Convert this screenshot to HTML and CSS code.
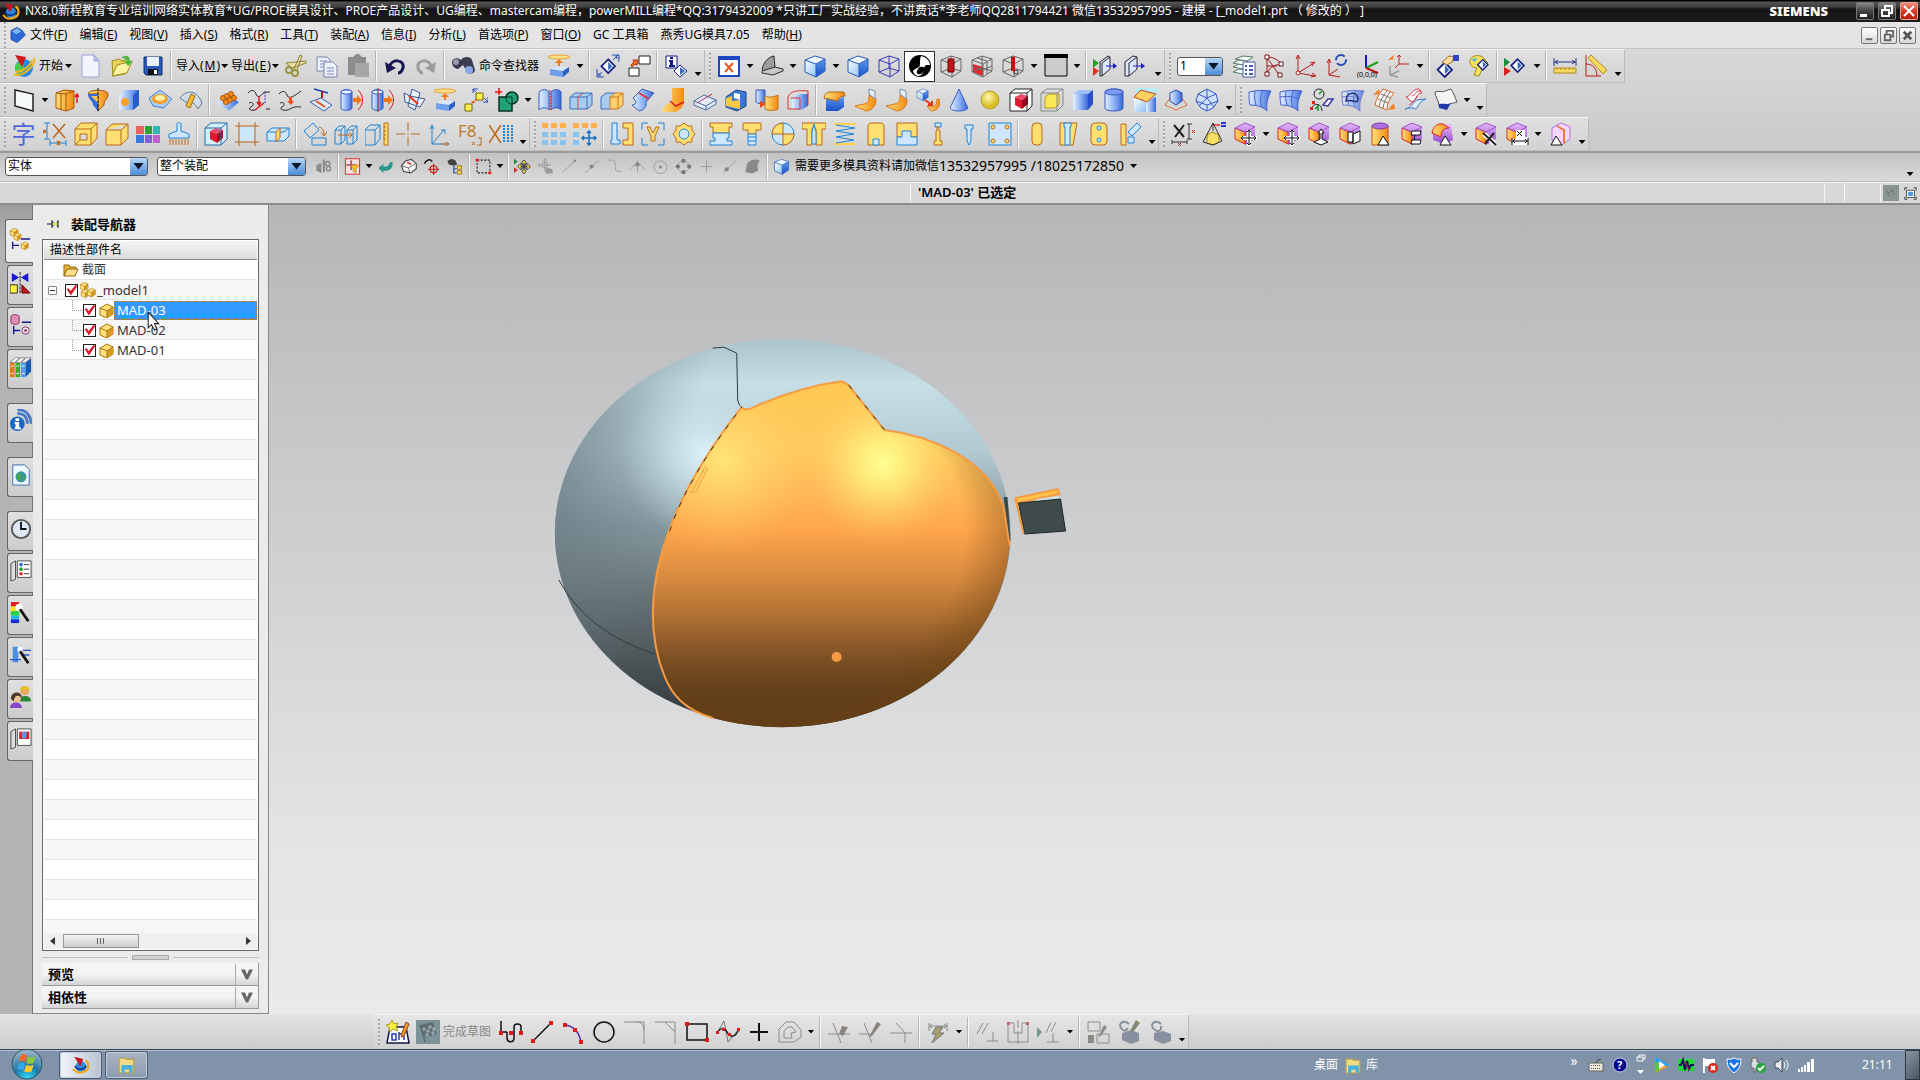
FILE: index.html
```html
<!DOCTYPE html>
<html lang="zh-CN">
<head>
<meta charset="utf-8">
<title>NX 8.0 - 建模 - [_model1.prt]</title>
<link rel="stylesheet" href="styles.css">
</head>
<body>
<svg class="sprite" aria-hidden="true">
<defs>
<linearGradient id="gBlue"><stop offset="0" stop-color="#e6f0ff"/><stop offset=".5" stop-color="#8fb4f5"/><stop offset="1" stop-color="#3a66d6"/></linearGradient>
<linearGradient id="gDeep" x2="0" y2="1"><stop offset="0" stop-color="#5b9cf0"/><stop offset="1" stop-color="#1a4fc8"/></linearGradient>
<linearGradient id="gPale" x2="1" y2="1"><stop offset="0" stop-color="#ffffff"/><stop offset="1" stop-color="#8ec2f2"/></linearGradient>
<linearGradient id="gOr"><stop offset="0" stop-color="#ffe07c"/><stop offset="1" stop-color="#f48a10"/></linearGradient>
<linearGradient id="gVio" x2="0" y2="1"><stop offset="0" stop-color="#e4b8f8"/><stop offset="1" stop-color="#9448cc"/></linearGradient>
<radialGradient id="gYel" cx=".4" cy=".35"><stop offset="0" stop-color="#fffbb0"/><stop offset="1" stop-color="#d8bc28"/></radialGradient>
<radialGradient id="gOrb" cx=".5" cy="1" r=".9"><stop offset="0" stop-color="#38e0f8"/><stop offset=".5" stop-color="#1a78a8"/><stop offset="1" stop-color="#8fb0c4"/></radialGradient>
<g id="p-cube"><path fill="#eef7ff" d="M2 6 12 2l10 3-9 5z"/><path fill="url(#gPale)" d="M2 6l11 4v13L2 18z"/><path fill="url(#gDeep)" d="M13 10l9-5v12l-9 6z"/><path class="ln" stroke="#2a5cb8" d="M2 6 12 2l10 3v12l-9 6-11-5zl11 4 9-5M13 10v13"/></g>
<g id="p-wire"><path class="ln" d="M2 6 12 2l10 3v12l-9 6-11-5zl11 4 9-5M13 10v13M12 2v12L2 18M12 14l10 3"/></g>
<g id="p-slab"><path fill="#d8e8fb" d="M3 15l7-3 12 1-6 4z"/><path fill="#6f9fec" d="M3 15l13 2v6L3 21z"/><path fill="#2d5fcc" d="M16 17l6-4v5l-6 5z"/></g>
<g id="p-red"><path fill="#f04a6a" d="M6 9l6-3 7 2-6 4z"/><path fill="#e01830" d="M6 9l7 3v9l-7-4z"/><path fill="#9c0a1c" d="M13 12l6-4v8l-6 5z"/></g>
<g id="p-sync"><path fill="url(#gVio)" d="M2 6 12 1l10 4v12l-10 6V10z"/><path fill="url(#gOr)" stroke="#e02020" d="M2 6l10 4v12L2 17z"/><path class="ln" stroke="#a050d0" d="M2 6 12 1l10 4-10 5z"/></g>
<g id="p-move"><path class="ln" stroke="#fff" stroke-width="4" d="M16 8v16M8 16h16"/><path class="ln" stroke="#111" d="M16 8v15M8 16h15M14 10l2-2 2 2M14 21l2 2 2-2M10 14l-2 2 2 2M21 14l2 2-2 2"/></g>
<g id="p-tri"><path fill="#fff" stroke="#111" d="M14 14l6 9H9z"/></g>
<g id="p-dia"><path fill="#fff" stroke="#101c80" stroke-width="2" d="M12 4l8 8-8 8-8-8z"/><path fill="#3a68c0" d="M12 7l5 5-5 5z"/></g>
<g id="p-box"><path fill="#ffe27a" stroke="#a8700c" d="M2 6l7-4 6 3v7l-6 4-7-3z"/><path fill="#d89a20" d="M9 9l6-4v7l-6 4z"/><path class="ln" stroke="#a8700c" d="M2 6l7 3 6-4M9 9v7"/></g>
</defs>

<!-- standard toolbar -->
<symbol id="nx" viewBox="0 0 24 24"><circle cx="12" cy="14" r="9" fill="#2a8ae0"/><path fill="#4cc84c" d="M5 9c4-2 8 2 7 6s-5 6-7 4-3-8 0-10z"/><path class="ln" stroke="#f0b818" stroke-width="2" d="M2 20c8 4 22-8 20-16M4 18c6 0 14-5 16-12"/><path fill="#d01818" d="M3 1l11 2-4 10z"/></symbol>
<symbol id="nxt" viewBox="0 0 24 24"><circle cx="12" cy="14" r="7" fill="#2a8ae0"/><path class="ln" stroke="#f0a818" stroke-width="3" d="M2 17c2 8 20 6 20-4 0-3-2-6-4-7"/><path class="ln" stroke="#102c80" stroke-width="2" d="M4 13c2 6 12 6 15 0"/><path fill="#c01828" d="M3 1l12 3-4 10z"/></symbol>
<symbol id="cubeb" viewBox="0 0 24 24"><path fill="#2a6ad8" stroke="#123a90" d="M4 6l8-4 7 4 4 6-6 6-5 4-8-4z"/><path fill="#7db4f8" d="M5 7l7-4 6 4-7 4z"/></symbol>
<symbol id="new" viewBox="0 0 24 24"><path fill="#f2f4ff" stroke="#9aa2d8" d="M3 1h12l5 6v16H3z"/><path fill="#c4caf0" stroke="#9aa2d8" d="M15 1v6h5z"/></symbol>
<symbol id="open" viewBox="0 0 24 24"><path fill="#e8d45c" stroke="#a08a18" d="M2 7l7-2 3 2 6-2v4l-3 11L3 22z"/><path fill="#fbf3a0" stroke="#a08a18" d="M2 22L7 11l15-4-5 12z"/><path fill="#4cb83c" d="M11 4c5-4 9-2 9 3h3l-5 5-4-5h3c0-2-3-3-6-3z"/></symbol>
<symbol id="save" viewBox="0 0 24 24"><path fill="#2a58b8" stroke="#102c70" d="M3 3h18v18H5l-2-2z"/><path fill="#e8f0ff" d="M6 3h12v9H6z"/><path fill="#111" d="M7 15h10v6H7z"/><path fill="#fff" d="M13 16h3v4h-3z"/></symbol>
<symbol id="cut" viewBox="0 0 24 24"><path fill="#e8e0a0" stroke="#8a8238" d="M16 1l2 1-5 14-3-1zM2 9l20-2v2L8 14z"/><g class="ln" stroke="#9c9440" stroke-width="2"><circle cx="5" cy="16" r="3"/><circle cx="11" cy="19" r="3"/></g></symbol>
<symbol id="copy" viewBox="0 0 24 24"><g fill="#eef0fa" stroke="#7c84b0"><path d="M2 3h10l3 3v11H2z"/><path d="M9 8h9l4 4v11H9z"/></g><path class="ln" stroke="#7888c0" d="M5 7h7M5 10h4M5 13h4M12 14h7M12 17h7M12 20h7"/></symbol>
<symbol id="paste" viewBox="0 0 24 24"><path fill="#8c8c8c" d="M2 3h5l3-3h3l3 3h4v18H2z"/><path fill="#a6a6a6" d="M9 9h14v14H9z"/></symbol>
<symbol id="undo" viewBox="0 0 24 24"><path class="ln" stroke="#161650" stroke-width="3" d="M6 14C8 4 22 5 20 14c-1 3-3 5-5 5"/><path fill="#161650" d="M2 8l2 11 9-5z"/></symbol>
<symbol id="redo" viewBox="0 0 24 24"><path class="ln" stroke="#9c9c9c" stroke-width="3" d="M18 14C16 4 2 5 4 14c1 3 3 5 5 5"/><path fill="#9c9c9c" d="M22 8l-2 11-9-5z"/></symbol>
<symbol id="find" viewBox="0 0 24 24"><path fill="#3c3c50" d="M1 8c0-4 6-5 9-2 2-4 10-4 11 0l3 10c-1 5-8 5-9 0l-3-5-5 4C5 15 1 13 1 8z"/><circle cx="18" cy="16" r="4" fill="#8aa8e8"/><circle cx="5" cy="8" r="3" fill="#9a9ab0"/></symbol>
<symbol id="thick" viewBox="0 0 24 24"><ellipse cx="12" cy="3" rx="11" ry="2" fill="#ffe28c" stroke="#f0a030"/><path fill="#f07818" d="M12 5l4 4h-3v4h-2V9H8z"/><use href="#p-slab"/></symbol>
<symbol id="rot" viewBox="0 0 24 24"><g transform="translate(2 2) scale(.85)"><use href="#p-dia"/></g><path class="ln" stroke="#2a50b0" d="M16 1h7v7M22 1l-5 5M20 1v3h3M1 15v8h7M1 23l5-5M4 23v-3H1"/></symbol>
<symbol id="swap" viewBox="0 0 24 24"><path fill="#fff" stroke="#222" d="M12 2h11v8H12zM2 14h10v8H2z"/><path fill="#f07818" stroke="#c02818" d="M4 11l3-3-1-2 5 0-1 5-2-1-3 3z"/></symbol>
<symbol id="info" viewBox="0 0 24 24"><path fill="#fff" stroke="#101c80" d="M2 2h11v12H2z"/><path fill="#101c80" d="M6 3h3v2H6zM5 6h4v5h2v2H5v-2h1V8H5z"/><path fill="#fff" stroke="#101c80" d="M16 11l7 6-7 6-6-6z"/><path fill="#3a68c0" d="M16 13l5 4-5 4z"/></symbol>
<symbol id="fit" viewBox="0 0 24 24"><path fill="#fff" stroke="#1a48c0" stroke-width="2" d="M2 3h20v19H2z"/><path fill="#1a48c0" d="M2 2h20v4H2z"/><path class="ln" stroke="#e05a18" stroke-width="2" d="M8 9l8 9M16 9l-8 9"/></symbol>
<symbol id="orient" viewBox="0 0 24 24"><path fill="#9c9c9c" stroke="#2c2c2c" d="M2 15C4 8 8 3 14 2l1 11-10 5z"/><path fill="#c8c8c8" stroke="#2c2c2c" d="M2 17l13-4 8 2v2l-10 4-11-2z"/></symbol>
<symbol id="shade" viewBox="0 0 24 24"><use href="#p-cube"/></symbol>
<symbol id="wire" viewBox="0 0 24 24"><use href="#p-wire" stroke="#3838b8"/></symbol>
<symbol id="studio" viewBox="0 0 24 24"><circle cx="12" cy="12" r="11" fill="#000"/><path fill="#fff" d="M13 2a10 10 0 0 1 9 9c-3 0-5-1-6 3s-1 8-6 8c-2 0-5-3-5-5 3-4 7-2 7-7 0-3 0-6 1-8z"/><path fill="#000" d="M12 13c3-1 5 0 4 3s-3 5-6 4 0-6 2-7z"/></symbol>
<symbol id="face1" viewBox="0 0 24 24"><use href="#p-wire" stroke="#666"/><path fill="#b81818" stroke="#700" d="M9 5h6v13H9z"/></symbol>
<symbol id="face2" viewBox="0 0 24 24"><path fill="#e02828" d="M3 10l10 3v9L3 18z"/><use href="#p-wire" stroke="#666"/><path class="ln" stroke="#666" d="M7 4l10 3v13M2 12l11 4 9-4"/></symbol>
<symbol id="face3" viewBox="0 0 24 24"><use href="#p-wire" stroke="#666"/><path fill="#b81818" d="M10 3h4v14h-4z"/><circle cx="15" cy="18" r="2" fill="none" stroke="#333"/></symbol>
<symbol id="bg" viewBox="0 0 24 24"><path fill="#ccc" stroke="#000" stroke-width="1" d="M1 2h22v20H1z"/><path fill="#000" d="M0 0h24v4H0z"/></symbol>
<symbol id="clip" viewBox="0 0 24 24"><path fill="#28a028" d="M0 5l6 4-6 5z"/><path fill="#e03020" d="M0 13l6 4-6 5z"/><path fill="#dce8ff" stroke="#222" d="M7 8l8-6 2 1v12l-8 7H7z"/><path class="ln" stroke="#222" d="M9 9v13M9 9l8-6"/><path class="ln" stroke="#1818d0" d="M13 12h9"/><path fill="#1818d0" d="M20 9l4 3-4 3z"/></symbol>
<symbol id="clip2" viewBox="0 0 24 24"><path fill="#dce8ff" stroke="#222" d="M1 8l8-6 4 1v12l-8 7H1z"/><path class="ln" stroke="#222" d="M5 9v13M5 9l8-6"/><path class="ln" stroke="#1818d0" d="M9 12h9"/><path fill="#1818d0" d="M17 9l4 3-4 3z"/></symbol>
<symbol id="layers" viewBox="0 0 24 24"><g fill="#f4fff8" stroke="#5a7a6a"><path d="M1 18l6-3 9 1-5 4z"/><path d="M1 13l6-3 9 1-5 4z"/><path d="M1 9l6-3 9 1-5 4z"/><path d="M3 5l8-3 10 1-6 4z"/></g><path fill="#fff" stroke="#4858b0" d="M11 8h12v15H11z"/><path class="ln" stroke="#4858b0" stroke-width="2" d="M13 12h2M17 12h4M13 16h2M17 16h4M13 20h2M17 20h4"/></symbol>
<symbol id="wcs1" viewBox="0 0 24 24"><path class="ln" stroke="#a01818" d="M4 3v16M4 3c8 0 14 5 14 8M4 19c4-7 9-9 14-8M5 5l12 17M4 12l10 0"/><g fill="#fff" stroke="#701010"><path d="M2 1h4v4H2zM2 18h4v4H2zM16 8h4v4h-4zM15 19h4v4h-4z"/></g></symbol>
<symbol id="wcs2" viewBox="0 0 24 24"><path class="ln" stroke="#b81c1c" d="M4 19V2M4 19L20 9M4 19l17 3M2 5l2-4 2 4M16 9l5-1-3 4M18 19l4 3-5 1"/><circle cx="4" cy="19" r="2" fill="#fff" stroke="#b81c1c"/></symbol>
<symbol id="wcs3" viewBox="0 0 24 24"><path class="ln" stroke="#b81c1c" d="M4 21V6M4 21l9-6M4 21l11 2M2 9l2-4 2 4"/><circle cx="16" cy="6" r="5" fill="none" stroke="#2848b8" stroke-width="2" stroke-dasharray="12 3"/></symbol>
<symbol id="wcs5" viewBox="0 0 24 24"><path class="ln" stroke="#c02020" d="M12 10V1M12 10h10M12 10l-4 4M10 3l2-2 2 2"/><path class="ln" stroke="#999" stroke-width="1.500" d="M3 21v-9M3 21l9-4M3 21l8 2"/><path fill="#f07818" d="M1 6l6-5-1 4 3 0z"/></symbol>
<symbol id="hand" viewBox="0 0 24 24"><g transform="translate(-2 5) scale(.9)"><use href="#p-dia"/></g><path fill="#ffdca0" stroke="#a07030" d="M6 8l7-6 5 1-2 5-5 3z"/><path fill="#2a48c0" d="M17 1h6v6h-6z"/></symbol>
<symbol id="key" viewBox="0 0 24 24"><path fill="#f8e460" stroke="#a88818" d="M3 6c2-6 13-6 15 0l3 3-6 6-3 7-5-1 3-7c-5 0-8-4-7-8z"/><path fill="#38b0e8" d="M5 5l6-1-4 4z"/><g transform="translate(8 3) scale(.65)"><use href="#p-dia"/></g></symbol>
<symbol id="show" viewBox="0 0 24 24"><path fill="#189038" d="M0 4l6 4-6 5z"/><path fill="#d82020" d="M0 13l7 4-7 5z"/><g transform="translate(4 2) scale(.8)"><use href="#p-dia"/></g></symbol>
<symbol id="dist" viewBox="0 0 24 24"><path class="ln" stroke="#283880" d="M1 4v8M23 4v8M1 8h22M5 6L2 8l3 2M19 6l3 2-3 2"/><path fill="#f8d860" stroke="#b08a18" d="M1 14h22v5H1z"/><path class="ln" stroke="#b08a18" d="M4 14v2M8 14v2M12 14v2M16 14v2M20 14v2"/></symbol>
<symbol id="angle" viewBox="0 0 24 24"><path class="ln" stroke="#b81c1c" d="M2 1v21h15M2 10c7 0 11 5 11 12"/><path fill="#f8d860" stroke="#b08a18" d="M7 1l16 15-4 4L4 4z"/></symbol>

<!-- feature toolbar -->
<symbol id="sketch" viewBox="0 0 24 24"><path fill="#f6faf6" stroke="#222" stroke-width="1.500" d="M3 2l18 4v17L3 18z"/></symbol>
<symbol id="extr" viewBox="0 0 24 24"><path fill="url(#gOr)" stroke="#a85408" d="M1 5l8-3 10 1v17l-8 3-10-3z"/><path class="ln" stroke="#a85408" d="M6 6v15M11 6v16M1 5l10 1 8-3"/><path class="ln" stroke="#e01818" stroke-width="1.500" d="M22 15V7M20 9l2-3 2 3"/></symbol>
<symbol id="rev" viewBox="0 0 24 24"><path fill="url(#gOr)" stroke="#a85408" d="M2 6c0-5 20-5 20 0 0 6-4 5-4 11l-6 6V6z"/><path fill="#3a6ad8" d="M2 6l10 0v17l-5-6c0-5-5-5-5-11z"/><path fill="#f8c858" d="M5 8h7v7z"/><path class="ln" stroke="#111" stroke-dasharray="3 1" d="M12 0v24"/></symbol>
<symbol id="hole" viewBox="0 0 24 24"><path fill="url(#gBlue)" d="M2 7l6-5h14v15l-6 5H2z"/><path fill="#2a5ad0" d="M16 7l6-5v15l-6 5z"/><circle cx="8" cy="14" r="4" fill="#f8a028"/><path fill="#8a5008" d="M4 14a4 4 0 0 0 5 4 4 4 0 0 1-5-4z"/></symbol>
<symbol id="emb" viewBox="0 0 24 24"><path fill="#a8ccf8" stroke="#4a80d0" d="M1 10L12 2l12 9-8 9-11-2z"/><ellipse cx="12" cy="11" rx="8" ry="5" fill="#f8a028"/><ellipse cx="12" cy="10" rx="5" ry="3" fill="#fff0b0"/></symbol>
<symbol id="off" viewBox="0 0 24 24"><path fill="#cfdcec" stroke="#607890" d="M1 10C8 1 18 2 23 15l-4 6c-3-6-7-8-11-6z"/><path fill="#f8b838" stroke="#a07010" d="M12 6l4 2-5 12-4-2z"/></symbol>
<symbol id="patt" viewBox="0 0 24 24"><path fill="url(#gBlue)" d="M1 15l11-7 11 6-10 9z"/><g fill="#f89018" stroke="#a85408"><circle cx="7" cy="10" r="2.500"/><circle cx="11" cy="8" r="2.500"/><circle cx="15" cy="6" r="2.500"/><circle cx="10" cy="14" r="2.500"/><circle cx="14" cy="12" r="2.500"/><circle cx="18" cy="10" r="2.500"/></g></symbol>
<symbol id="proj" viewBox="0 0 24 24"><path class="ln" stroke="#222" d="M1 5c3-4 7-3 8 1s5 3 8-2h6M2 15c4-2 6 2 2 4s0 4 4 3M19 21h4"/><path class="ln" stroke="#e01818" stroke-width="1.500" d="M8 22l9-7M12 8v8M10 14l2 3 2-3"/><path class="ln" stroke="#3838d0" stroke-dasharray="2 1" d="M18 4v12"/></symbol>
<symbol id="curv" viewBox="0 0 24 24"><path class="ln" stroke="#222" d="M1 6c3-4 7-3 8 1s5 3 14-4M2 15c4-2 6 2 2 4s3 5 8 2 8-2 11-2"/><path fill="#f05018" d="M11 9h3v4h2l-3 4-4-4h2z"/></symbol>
<symbol id="trimp" viewBox="0 0 24 24"><path class="ln" stroke="#1838c0" stroke-width="1.500" d="M5 1l14 4"/><path class="ln" stroke="#b81818" stroke-width="2" d="M13 3v7"/><path fill="#dce8fa" stroke="#4060a8" d="M1 14l11-4 11 7-8 6z"/><path class="ln" stroke="#e05818" stroke-width="2" d="M7 13l9 6"/></symbol>
<symbol id="cyl1" viewBox="0 0 24 24"><path fill="url(#gBlue)" stroke="#3458c0" d="M1 4c0-3 11-3 11 0v16c0 3-11 3-11 0z"/><ellipse cx="6.500" cy="4" rx="5.500" ry="2" fill="#eaf4ff" stroke="#3458c0"/><path class="ln" stroke="#e01818" d="M18 2c6 6 6 14 0 20"/><path fill="#f07818" d="M13 10h4V7l5 5-5 5v-3h-4z"/></symbol>
<symbol id="cylax" viewBox="0 0 24 24"><use href="#cyl1"/><path class="ln" stroke="#b01818" d="M7 0v24"/></symbol>
<symbol id="inter" viewBox="0 0 24 24"><path fill="#e8f0fa" stroke="#3a5898" d="M2 5l6 3 15 3-5 8-15-5zM10 1l8 4-5 17-7-4z"/><path class="ln" stroke="#e03018" stroke-width="2" d="M7 8l9 8"/></symbol>
<symbol id="mv" viewBox="0 0 24 24"><path fill="#fff04c" stroke="#706808" d="M12 5h7v7h-7zM1 16h7v7H1z"/><path class="ln" stroke="#e05018" stroke-width="2" stroke-dasharray="3 1" d="M8 15l4-3"/><path class="ln" stroke="#2848c0" d="M9 5V1h5M24 9v5h-5M9 1l3 3M24 14l-4-4"/></symbol>
<symbol id="unite" viewBox="0 0 24 24"><path fill="#22a078" stroke="#0a3024" stroke-width="1.500" d="M4 9h7a6 6 0 1 1 6 7v7H4z"/><path class="ln" stroke="#0a3024" d="M10 9h7v7c-4 0-6-3-6-7"/><path class="ln" stroke="#e01818" stroke-width="1.500" d="M4 0v7M0 4h7"/></symbol>
<symbol id="pair" viewBox="0 0 24 24"><path fill="url(#gBlue)" stroke="#3458c0" d="M1 4c2-3 9-3 10 0v18c-3-3-7-3-10 0zM13 4c2-3 9-3 10 0v18c-3-3-7-3-10 0z"/><path class="ln" stroke="#e01818" stroke-dasharray="2 1" d="M12 2v20"/></symbol>
<symbol id="boxs" viewBox="0 0 24 24"><path fill="#a8ccf0" stroke="#3a70c0" d="M1 9l5-4h17v12l-5 4H1z"/><path class="ln" stroke="#3a70c0" d="M1 9h17l5-4M18 9v12"/><path class="ln" stroke="#e04040" d="M9 21V9l5-4"/></symbol>
<symbol id="boxo" viewBox="0 0 24 24"><path fill="#a8ccf0" stroke="#3a70c0" d="M1 9l5-4h9v12l-5 4H1z"/><path fill="#ffcf70" stroke="#d07818" d="M10 9l5-4h8v12l-5 4h-8z"/><path class="ln" stroke="#d07818" d="M10 9h8l5-4M18 9v12"/></symbol>
<symbol id="bend" viewBox="0 0 24 24"><path fill="url(#gBlue)" stroke="#3a60b0" d="M2 10l9-9 12 4-8 9c1 5-2 8-7 9l-7-6c6-1 4-4 1-7z"/><path class="ln" stroke="#e03030" stroke-width="1.500" d="M8 5l10 6"/></symbol>
<symbol id="tube" viewBox="0 0 24 24"><path fill="url(#gOr)" d="M10 0h12v15c-1 4-4 7-8 9H0c0-5 4-8 10-10z"/><path class="ln" stroke="#d82018" stroke-width="1.500" d="M8 13l6 5 8-4"/></symbol>
<symbol id="plate" viewBox="0 0 24 24"><path fill="#e4eefa" stroke="#4868a0" d="M1 13l10-6 12 5v4l-10 6-12-5z"/><path class="ln" stroke="#4868a0" d="M1 13l12 5 10-6M13 18v4"/><path class="ln" stroke="#b83050" d="M4 15L19 6"/></symbol>
<symbol id="pocket" viewBox="0 0 24 24"><path fill="#3a78d0" stroke="#1c4490" d="M2 9l10-7 10 2v14l-9 5-11-4z"/><path fill="#f8c848" d="M2 10l6-2v5l8-1v9l-14-3z"/><path fill="#fff" d="M10 5l6 1v6l-6-2z"/></symbol>
<symbol id="cyl2" viewBox="0 0 24 24"><path fill="url(#gBlue)" stroke="#3458c0" d="M1 2h9v12c-3 2-7 2-9 0z"/><path fill="url(#gOr)" stroke="#c07010" d="M10 8c4 2 9 1 13-1v14c-4 2-9 2-13 0z"/><path fill="#e04818" d="M5 13l6 3-6 4z"/></symbol>
<symbol id="shell" viewBox="0 0 24 24"><path fill="url(#gBlue)" d="M6 12c0-6 8-6 16-6v12l-7 4H6z"/><path class="ln" stroke="#e03030" d="M2 9c2-6 10-7 20-6v14M2 9v12h12V10H5"/></symbol>
<symbol id="blend" viewBox="0 0 24 24"><path fill="url(#gDeep)" d="M3 9c6 0 8 0 12 3v11H3zM15 12l6-4v11l-6 4z"/><path fill="url(#gOr)" stroke="#b06008" d="M1 10c1-4 3-6 6-6h14l1 4c-4 0-7 2-7 5z"/></symbol>
<symbol id="swp" viewBox="0 0 24 24"><path fill="url(#gOr)" stroke="#d87818" d="M1 18l9-2c5-1 5-5 5-9l7 4c0 7-3 11-10 12z"/><path fill="#e8f0f8" stroke="#7890b0" d="M15 6V1l6 2v8z"/></symbol>
<symbol id="cs" viewBox="0 0 24 24"><g transform="scale(.55)"><use href="#p-cube"/></g><path class="ln" stroke="#e03818" stroke-width="2" d="M9 12l7 5M16 13v4h-4"/><path fill="url(#gOr)" stroke="#d87818" d="M11 18l5 1c4-1 5-4 5-8l3 1c0 7-3 11-9 11z"/></symbol>
<symbol id="cone" viewBox="0 0 24 24"><path fill="url(#gBlue)" stroke="#3a60c8" d="M12 1l9 19c-2 4-16 4-18 0z"/></symbol>
<symbol id="ball" viewBox="0 0 24 24"><circle cx="12" cy="12" r="9" fill="url(#gYel)" stroke="#b8a028"/></symbol>
<symbol id="redbox" viewBox="0 0 24 24"><path fill="#fff" d="M1 5l5-4h17v17l-5 5H1z"/><use href="#p-red"/><path class="ln" stroke="#222" d="M1 5l5-4h17v17l-5 5H1zh17l5-4M18 5v18"/></symbol>
<symbol id="yelbox" viewBox="0 0 24 24"><path fill="#fbe858" stroke="#b0980c" d="M5 9l4-3h10v10l-4 4H5z"/><path class="ln" stroke="#888" d="M1 5l6-4h16v16l-6 6H1zh16l6-4M17 5v18"/></symbol>
<symbol id="block" viewBox="0 0 24 24"><path fill="#9cc0fa" d="M2 6l6-4h14l-5 4z"/><path fill="url(#gBlue)" d="M2 6h15v16H2z"/><path fill="#2a50c8" d="M17 6l5-4v14l-5 6z"/></symbol>
<symbol id="cyl" viewBox="0 0 24 24"><path fill="url(#gBlue)" stroke="#3458c0" d="M3 4c0-4 18-4 18 0v16c0 4-18 4-18 0z"/><ellipse cx="12" cy="4" rx="9" ry="3" fill="#7a9cf0" stroke="#3458c0"/></symbol>
<symbol id="cham" viewBox="0 0 24 24"><path fill="#b8ecfa" d="M3 0h21v14H3z"/><path fill="url(#gPale)" d="M1 10l12 4v10H1z"/><path fill="url(#gBlue)" d="M13 13l10-4v15H13z"/><path fill="#ffd060" stroke="#c04818" d="M1 9l7-7 15 4-9 8z"/></symbol>
<symbol id="pyr" viewBox="0 0 24 24"><path class="ln" stroke="#e07038" d="M12 2l11 15-11 5L1 17z"/><path fill="url(#gBlue)" stroke="#2848a8" d="M6 5l6-3 6 3v8l-6 4-6-4z"/></symbol>
<symbol id="gem" viewBox="0 0 24 24"><path fill="#cfe0ff" stroke="#3458c0" d="M12 1l9 5 2 7-5 7-6 3-6-3-5-7 2-7z"/><path class="ln" stroke="#3458c0" d="M3 6l9 4 9-4M12 1v9l-8 8M12 10l7 9M1 13l11 4 11-4M12 17v6"/></symbol>
<symbol id="surf1" viewBox="0 0 24 24"><path fill="url(#gBlue)" stroke="#4860c8" d="M1 4c8-2 14-2 22-1-3 6-5 12-4 20-5-5-12-6-17-6-1-4-1-8-1-13z"/><path class="ln" stroke="#4860c8" d="M7 3c-1 6 0 10 1 14M15 2c-3 6-3 12-1 17"/></symbol>
<symbol id="surf2" viewBox="0 0 24 24"><use href="#surf1"/><path class="ln" stroke="#4860c8" d="M1 9c7-1 13-1 19 2"/></symbol>
<symbol id="measc" viewBox="0 0 24 24"><circle cx="9" cy="6" r="5" fill="none" stroke="#222"/><path class="ln" stroke="#189028" stroke-width="1.500" d="M9 6l3-3M5 21l3-3v5"/><path class="ln" stroke="#222" d="M2 21c0-7 10-6 10 2"/><path fill="#fff" stroke="#3838a0" stroke-width="1.500" d="M13 17l5-6 5 0-5 7z"/><path fill="#e02020" d="M0 19h3v3H0zM2 13h3v3H2z"/></symbol>
<symbol id="surf3" viewBox="0 0 24 24"><use href="#surf2" opacity=".75"/><path class="ln" stroke="#203080" stroke-width="1.500" d="M5 13c0-10 12-10 12-2 0 6-4 0-12 2z"/></symbol>
<symbol id="surf4" viewBox="0 0 24 24"><path fill="#fff8f0" stroke="#e06030" d="M11 1l11 4c-4 5-7 10-7 17L3 17C4 11 7 6 11 1z"/><path class="ln" stroke="#777" d="M15 3c-4 5-7 10-8 16M18 4c-4 5-6 10-7 16M9 6l10 4M6 11l10 4"/><path fill="#f08028" d="M1 7l6-6 1 5zM16 22l6-7 1 6z"/></symbol>
<symbol id="surf5" viewBox="0 0 24 24"><path fill="#e0f0ff" stroke="#3878d0" d="M2 21c6 0 8-7 12-9l9-1c-5 1-7 6-10 10-4-2-8-1-11 0z"/><path fill="#fff" stroke="#e03848" d="M3 9c6-1 5-8 13-8l3 4c-6 0-5 7-10 9z"/><path class="ln" stroke="#e03848" d="M9 8c4-1 4-6 9-5M6 17c3-2 6-4 8-9"/></symbol>
<symbol id="flag" viewBox="0 0 24 24"><path fill="#f4f4f4" stroke="#555" d="M1 4c4-2 6 1 10-1l6-2c2 3 4 8 6 13-5 2-8 0-10 6l-8-2c0-6-4-9-4-14z"/><path fill="#2438b0" d="M5 16c5-1 8 1 12-1l-4 7-8-2z"/></symbol>

<!-- mould toolbar: gold and sky outlines -->
<symbol id="xdim" viewBox="0 0 24 24"><path class="ln sky" d="M4 1v16M1 1h6M1 17h6M7 21h16M7 18v6M23 18v6"/><path class="ln gold" stroke-width="1.500" d="M10 2l12 14M22 2L10 16M0 8l3 3M3 8l-3 3M14 19l3 4M17 19l-3 4"/></symbol>
<symbol id="cube0" viewBox="0 0 24 24"><path class="g" d="M1 7l6-6h16v15l-6 7H1z"/><path fill="#dcdcdc" stroke="#b8681c" d="M6 12h7v6H6z"/><path class="ln gold" d="M1 7h16l6-6M17 7v16M1 23l5-5"/></symbol>
<symbol id="cube1" viewBox="0 0 24 24"><path class="g" d="M1 8l6-6h16v14l-7 7H1zh15l7-6M16 8v15"/></symbol>
<symbol id="pal" viewBox="0 0 24 24"><path fill="#e86060" d="M0 4h8v8H0z"/><path fill="#30a030" d="M9 4h7v8H9z"/><path fill="#30b8b0" d="M17 4h7v8h-7z"/><path fill="#3878d8" d="M0 13h8v8H0z"/><path fill="#8060d8" d="M9 13h7v8H9z"/><path fill="#c060d0" d="M17 13h7v8h-7z"/></symbol>
<symbol id="brush" viewBox="0 0 24 24"><path class="s" d="M10 2c0-2 4-2 4 0v7l8 3v4H2v-4l8-3z"/><path class="ln gold" d="M3 17v6M6 17v6M9 17v6M12 17v6M15 17v6M18 17v6M21 17v6"/></symbol>
<symbol id="redcube" viewBox="0 0 24 24"><path fill="#d4f0f4" d="M1 6l6-5h16v16l-6 6H1z"/><use href="#p-red"/><path class="ln" stroke="#2868a8" d="M1 6l6-5h16v16l-6 6H1zh16l6-5M17 6v17"/></symbol>
<symbol id="frame" viewBox="0 0 24 24"><path fill="#cfe6ff" d="M5 5h14v14H5z"/><path class="ln gold" d="M4 0v24M20 0v24M0 4h24M0 20h24"/></symbol>
<symbol id="split" viewBox="0 0 24 24"><path class="s" d="M1 10l5-4h17v8l-5 5H1zh17l5-4"/><path class="g" d="M10 10l4-4v10l-4 4z"/></symbol>
<symbol id="rotp" viewBox="0 0 24 24"><path class="ln sky" d="M1 9l9-8 6 7-9 8zM9 16h14v7H9z"/><path class="ln gold" d="M16 5c4 1 5 4 5 8M18 10l3 4 3-4"/></symbol>
<symbol id="twob" viewBox="0 0 24 24"><path class="ln sky" d="M1 8l4-4h6v14l-4 4H1zM13 8l4-4h6v14l-4 4h-6zM1 8h6v14M13 8h6v14M7 8l4-4M19 8l4-4"/><path class="ln gold" d="M4 13h14M15 10l3 3-3 3"/></symbol>
<symbol id="bruler" viewBox="0 0 24 24"><path class="ln sky" d="M0 8l5-5h10v14l-5 6H0zh10l5-5M10 8v15"/><path class="g" d="M19 1h4v22h-4z"/><path class="ln gold" d="M19 5h2M19 9h2M19 13h2M19 17h2"/></symbol>
<symbol id="cross" viewBox="0 0 24 24"><path class="ln gold" d="M12 0v9M12 15v9M0 12h9M15 12h9M12 11v2"/></symbol>
<symbol id="axes" viewBox="0 0 24 24"><path class="ln sky" d="M5 22V4M3 7l2-4 2 4M5 22h14M5 22L17 8M14 8h4v4"/><path class="ln gold" d="M14 22h8M19 20l3 2-3 2"/></symbol>
<symbol id="xline" viewBox="0 0 24 24"><path class="ln gold" stroke-width="1.500" d="M0 3l12 18M12 3L0 21"/><path class="ln sky" stroke-dasharray="2 1" stroke-width="2" d="M15 3v18M19 3v18M23 3v18"/></symbol>
<symbol id="grid1" viewBox="0 0 24 24"><path fill="#ffb04c" d="M0 1h6v5H0zM9 1h6v5H9zM18 1h6v5h-6z"/><path fill="#88c4f0" d="M0 10h6v5H0zM9 10h6v5H9zM18 10h6v5h-6zM0 18h6v5H0zM9 18h6v5H9zM18 18h6v5h-6z"/></symbol>
<symbol id="grid2" viewBox="0 0 24 24"><path fill="#ffb04c" d="M0 1h6v5H0zM9 1h6v5H9zM18 1h6v5h-6z"/><path fill="#88c4f0" d="M0 10h6v5H0zM0 18h6v5H0z"/><path class="ln" stroke="#1870c0" stroke-width="1.500" d="M16 9v14M9 16h14M14 11l2-2 2 2M14 21l2 2 2-2M11 14l-2 2 2 2M21 14l2 2-2 2"/></symbol>
<symbol id="mb" viewBox="0 0 24 24"><path class="s" d="M2 1h5v17h3v4H1V18h1z"/><path class="g" d="M13 1h10v22H13v-5h5V6h-5z"/></symbol>
<symbol id="ybr" viewBox="0 0 24 24"><path class="ln sky" d="M1 8V1h6M17 1h6v7M23 16v7h-6M7 23H1v-7"/><path class="g" d="M6 5h3l3 6 3-6h3l-4 9v5h-4v-5z"/></symbol>
<symbol id="flower" viewBox="0 0 24 24"><path class="g" d="M12 1l4 3 4 0 0 4 3 4-3 4 0 4-4 0-4 3-4-3-4 0 0-4-3-4 3-4 0-4 4 0z"/><circle class="s" cx="12" cy="12" r="5"/></symbol>
<symbol id="col" viewBox="0 0 24 24"><path class="g" d="M1 1h22v4h-3v6H4V5H1z"/><path class="s" d="M4 11h16v5h-2v3h5v4H1v-4h5v-3H4z"/></symbol>
<symbol id="bolt" viewBox="0 0 24 24"><path class="g" d="M3 1h18v7h-5v4H8V8H3z"/><path class="s" d="M8 12h8v11H8zM8 15h8M8 19h8"/></symbol>
<symbol id="target" viewBox="0 0 24 24"><circle class="s" cx="12" cy="12" r="11"/><path class="g" d="M12 12V1A11 11 0 0 0 1 12zM12 12v11a11 11 0 0 0 11-11z"/></symbol>
<symbol id="tt" viewBox="0 0 24 24"><path class="g" d="M0 1h24v6h-4v16h-6V7l-2-3-2 3v16H5V7H0z"/><path class="s" d="M12 2l2 8v12h-4V10z"/></symbol>
<symbol id="spring" viewBox="0 0 24 24"><path class="ln" stroke-width="2" stroke="#ffcf50" d="M1 2h22M1 22h22"/><path class="ln sky" d="M3 3l19 3L3 9l18 3-18 3 18 3-18 3"/></symbol>
<symbol id="blk1" viewBox="0 0 24 24"><path class="g" d="M4 3l2-2h12l2 2v20H4z"/><path class="s" d="M9 17h6v6H9z"/></symbol>
<symbol id="blk2" viewBox="0 0 24 24"><path class="g" d="M2 1h20v14H2z"/><path class="s" d="M2 15h5V9h9v6h6v8H2z"/></symbol>
<symbol id="pin1" viewBox="0 0 24 24"><path class="s" d="M9 1h6v4H9z"/><path class="g" d="M11 5h2v4h1v10h2v4H8v-4h2V9h1z"/></symbol>
<symbol id="pin2" viewBox="0 0 24 24"><path class="s" d="M8 3h8v4h-2v12l-2 4-2-4V7H8z"/></symbol>
<symbol id="plate4" viewBox="0 0 24 24"><path class="s" d="M1 1h22v22H1z"/><g class="g"><circle cx="5" cy="5" r="2"/><circle cx="19" cy="5" r="2"/><circle cx="5" cy="19" r="2"/><circle cx="19" cy="19" r="2"/></g></symbol>
<symbol id="pill" viewBox="0 0 24 24"><rect class="g" x="7" y="1" width="10" height="22" rx="4"/></symbol>
<symbol id="wedge" viewBox="0 0 24 24"><path class="g" d="M4 1h17l-4 22H4z"/><path class="s" d="M8 1h7v4h-1v18H9V5H8z"/></symbol>
<symbol id="pill2" viewBox="0 0 24 24"><rect class="g" x="4" y="1" width="16" height="22" rx="4"/><circle class="s" cx="12" cy="6" r="2"/><circle class="s" cx="12" cy="18" r="2"/></symbol>
<symbol id="lifter" viewBox="0 0 24 24"><path class="g" d="M3 2h5v21H3z"/><path class="s" d="M10 10l9-9 4 4-9 9zM10 15h6v6h-6z"/></symbol>
<symbol id="xd2" viewBox="0 0 24 24"><path class="ln" stroke="#222" stroke-width="2" d="M3 3l10 12M13 3L4 15"/><path class="ln" stroke="#333" d="M18 2v15M16 2h5M16 17h5M1 20h15M1 18v4M16 18v4"/><path class="ln" stroke="#c02828" d="M21 8l3 3M24 8l-3 3M7 21l3 3M10 21l-3 3"/></symbol>
<symbol id="mesh" viewBox="0 0 24 24"><path fill="#f8e068" stroke="#a08818" d="M5 13l5-3 7 3v7l-6 3-6-2z"/><path class="ln" stroke="#333" d="M11 1L1 20l10 3 9-4zM11 1v8"/><path class="ln" stroke="#e02828" stroke-width="1.500" d="M12 3h6"/><path class="ln" stroke="#2838d0" stroke-width="2" d="M19 1h5M19 4h5"/></symbol>
<symbol id="sy1" viewBox="0 0 24 24"><use href="#p-sync"/><use href="#p-move"/></symbol>
<symbol id="sy2" viewBox="0 0 24 24"><use href="#p-sync"/><path fill="#fff" stroke="#111" d="M14 7l3 4h-2v6l6 3-7 3-7-3 6-3v-6h-2z"/></symbol>
<symbol id="sy3" viewBox="0 0 24 24"><use href="#p-sync"/><path fill="#fff" stroke="#111" d="M10 10h5v10h-5zM15 12l7-3v10l-7 3z"/></symbol>
<symbol id="sy4" viewBox="0 0 24 24"><path fill="url(#gOr)" stroke="#c05018" d="M3 4h16v19H3z"/><ellipse cx="11" cy="4" rx="8" ry="3" fill="#b070e0" stroke="#7838a8"/><use href="#p-tri"/></symbol>
<symbol id="sy5" viewBox="0 0 24 24"><use href="#p-sync"/><path fill="#fff" stroke="#111" d="M12 9h9l-1 4h-9zM12 18h9l-1 4h-9zM15 13l-1 5"/></symbol>
<symbol id="sy6" viewBox="0 0 24 24"><path fill="url(#gVio)" d="M2 12 6 3l14-1 2 16-9 4-11-4z"/><path fill="url(#gOr)" stroke="#e02020" d="M1 11C2 5 6 1 12 2l6 4c-5 0-8 3-8 9z"/><use href="#p-tri"/></symbol>
<symbol id="sy7" viewBox="0 0 24 24"><use href="#p-sync"/><path class="ln" stroke="#fff" stroke-width="5" d="M10 12l11 10"/><path class="ln" stroke="#222" stroke-width="2" d="M9 11l13 12M20 11l-9 11"/></symbol>
<symbol id="sy8" viewBox="0 0 24 24"><use href="#p-sync"/><path fill="#fff" d="M11 8h9v7h3v8H7v-6h4z"/><path class="ln" stroke="#111" d="M12 9l5 5M17 9l-5 5M7 19h16M7 16v7M23 16v7M10 17l-2 2 2 2M20 17l2 2-2 2"/></symbol>
<symbol id="sy9" viewBox="0 0 24 24"><path fill="#f4d8fc" stroke="#b870e0" d="M4 6l9-5 9 4v12l-8 6-10-5z"/><path class="ln" stroke="#f07838" stroke-width="2" d="M9 4l7 4v13"/><g transform="translate(-6 0)"><use href="#p-tri"/></g></symbol>

<!-- selection bar -->
<symbol id="s1" viewBox="0 0 24 24"><path fill="#8c8c8c" d="M2 10l7-3v14l-7-3zM11 2h3v18h-3z"/><circle cx="18" cy="8" r="3" class="ln" stroke="#8c8c8c" stroke-width="2"/><circle cx="19" cy="15" r="3" class="ln" stroke="#8c8c8c" stroke-width="2"/></symbol>
<symbol id="s2" viewBox="0 0 24 24"><path fill="#f4e0e0" stroke="#d83838" stroke-width="1.500" d="M2 1h20v22H2z"/><path class="ln" stroke="#622" stroke-width="1.500" d="M10 3v14M3 10h14"/><path fill="#f8c828" stroke="#c07818" d="M9 10h12l-4 5v6l-4-2v-4z"/></symbol>
<symbol id="s3" viewBox="0 0 24 24"><path fill="#28988c" d="M2 14l7-6v4c6 1 9-2 9-6l4 0c1 8-4 13-13 12v3z"/></symbol>
<symbol id="s4" viewBox="0 0 24 24"><path fill="#f4f4f4" stroke="#444" stroke-width="1.500" d="M2 11l6-7 8-2 7 6v7l-8 6-10-2z"/><path class="ln" stroke="#444" d="M2 11l10 3 10-6M12 14l2 7"/><path class="ln" stroke="#d83030" stroke-width="2" d="M10 6l6 3"/></symbol>
<symbol id="s5" viewBox="0 0 24 24"><path class="ln" stroke="#111" stroke-width="2" d="M2 8c3-6 8-7 11-3"/><circle cx="15" cy="16" r="5" class="ln" stroke="#c01818" stroke-width="1.500"/><path class="ln" stroke="#c01818" stroke-width="1.500" d="M15 8v16M7 16h16"/></symbol>
<symbol id="s6" viewBox="0 0 24 24"><path fill="#444" d="M2 4l6-3 5 2 3 6-5 2-7-2z"/><path class="ln" stroke="#3868b0" stroke-width="2" d="M11 11v10h4M11 15h4"/><path fill="#f8d048" stroke="#806010" d="M16 11h6v5h-6zM16 18h6v5h-6z"/></symbol>
<symbol id="s7" viewBox="0 0 24 24"><path class="ln" stroke="#222" stroke-width="1.500" stroke-dasharray="3 2" d="M3 3h18v18H3z"/><path fill="#e02020" d="M1 1h4v4H1zM19 19h4v4h-4z"/></symbol>
<symbol id="s8" viewBox="0 0 24 24"><path fill="#189038" d="M0 1l5 4-5 4z"/><path fill="#d82020" d="M0 13l5 4-5 4z"/><path class="ln" stroke="#444" stroke-width="1.500" d="M14 3v19M6 12h17M9 7l10 10M19 7L9 17"/><g fill="#f8e048" stroke="#222"><circle cx="14" cy="6" r="2.500"/><circle cx="14" cy="19" r="2.500"/><circle cx="8" cy="12" r="2.500"/><circle cx="20" cy="12" r="2.500"/></g></symbol>
<symbol id="s9" viewBox="0 0 24 24"><path class="ln gr" d="M11 1v18M2 10h18M8 4l3-3 3 3M5 7l-3 3 3 3"/><circle class="ln gr" cx="11" cy="10" r="4"/><path fill="#999" d="M12 13l10 3v6H12z"/></symbol>
<symbol id="s10" viewBox="0 0 24 24"><path class="ln gr" d="M3 21L21 4"/><circle cx="21" cy="4" r="2" fill="#888"/></symbol>
<symbol id="s11" viewBox="0 0 24 24"><path class="ln gr" d="M3 21L21 4"/><circle cx="12" cy="12" r="3" fill="#888"/></symbol>
<symbol id="s12" viewBox="0 0 24 24"><path class="ln gr" d="M2 3h8c5 0 1 16 6 16h6"/></symbol>
<symbol id="s13" viewBox="0 0 24 24"><path class="ln gr" d="M2 16c5-9 15-9 20 0M12 3v17"/><circle cx="12" cy="9" r="3" fill="#888"/></symbol>
<symbol id="s14" viewBox="0 0 24 24"><circle class="ln gr" cx="12" cy="13" r="9"/><circle cx="12" cy="13" r="2" fill="#888"/></symbol>
<symbol id="s15" viewBox="0 0 24 24"><circle class="ln gr" cx="12" cy="12" r="8"/><g fill="#777"><circle cx="12" cy="4" r="3"/><circle cx="12" cy="20" r="3"/><circle cx="4" cy="12" r="3"/><circle cx="20" cy="12" r="3"/></g></symbol>
<symbol id="s16" viewBox="0 0 24 24"><path class="ln gr" d="M12 4v16M4 12h16"/></symbol>
<symbol id="s17" viewBox="0 0 24 24"><path class="ln gr" d="M3 21L21 4"/><circle cx="8" cy="16" r="3" fill="#888"/></symbol>
<symbol id="s18" viewBox="0 0 24 24"><path fill="#8a8a8a" d="M4 9c3-6 10-8 18-6l-3 7 1 8-9 4-9-2z"/></symbol>

<!-- sketch toolbar -->
<symbol id="k1" viewBox="0 0 24 24"><path fill="#fff" stroke="#111848" stroke-width="1.500" d="M4 7h16l3 16H1z"/><path class="ln" stroke="#2838b0" stroke-width="1.500" d="M6 20v-6h4v6zM13 20v-8M13 14h5v6"/><path fill="#fff040" stroke="#a8a018" d="M6 0l2 4 4-1-2 4 2 4-5-2-3 3-1-5-3-2 4-1z"/><path fill="#f0a028" stroke="#a04010" d="M20 2l3 2-5 12-3 1 1-4z"/></symbol>
<symbol id="k2" viewBox="0 0 24 24"><path fill="#7c9299" d="M0 0h24v24H0z"/><path fill="#5e6e72" d="M4 5l13-3 4 12-12 4z"/><path fill="#98a6a8" d="M6 8l3-1 1 3-3 1zM12 6l3-1 1 3-3 1zM10 10l3-1 1 3-3 1zM9 14l3-1 1 3-3 1zM16 8l3-1 1 3-3 1zM15 12l3-1 1 3-3 1z"/><path class="ln" stroke="#4c5a5e" d="M4 5l5 17"/></symbol>
<symbol id="k3" viewBox="0 0 24 24"><path class="ln" stroke="#111" stroke-width="1.500" d="M2 1v11h6M8 12v6c0 5 7 5 7 0V7c0-4 7-4 7 0v6"/><path fill="#e01818" d="M0 11h4v4H0zM10 11h4v4h-4zM20 11h4v4h-4z"/></symbol>
<symbol id="k4" viewBox="0 0 24 24"><path class="ln" stroke="#111" stroke-width="1.500" d="M3 21L21 3"/><path fill="#e01818" d="M1 19h4v4H1zM19 1h4v4h-4z"/></symbol>
<symbol id="k5" viewBox="0 0 24 24"><path class="ln" stroke="#5828a8" stroke-width="1.500" d="M4 5c9 1 14 7 16 17"/><path fill="#e01818" d="M2 3h4v4H2zM12 8h4v4h-4zM18 20h4v4h-4z"/></symbol>
<symbol id="k6" viewBox="0 0 24 24"><circle class="ln" stroke="#111" stroke-width="1.500" cx="12" cy="12" r="10"/></symbol>
<symbol id="k7" viewBox="0 0 24 24"><path class="ln gr" d="M1 2h12c6 0 8 3 8 9v13M13 2h8v8"/></symbol>
<symbol id="k8" viewBox="0 0 24 24"><path class="ln gr" d="M1 2h10l10 10v12M11 2h10v10"/></symbol>
<symbol id="k9" viewBox="0 0 24 24"><path class="ln" stroke="#111" stroke-width="1.500" d="M2 4h20v16H2z"/><path fill="#e01818" d="M0 2h4v4H0zM20 18h4v4h-4z"/></symbol>
<symbol id="k10" viewBox="0 0 24 24"><path class="ln" stroke="#777" d="M1 13L8 1l4 21 11-13"/><path class="ln" stroke="#222" stroke-width="1.500" d="M1 13c4-6 7-6 10-1s8 7 12-3"/><path fill="#e01818" d="M0 11h3v3H0zM6 8h3v3H6zM12 13h3v3h-3zM21 8h3v3h-3z"/></symbol>
<symbol id="k11" viewBox="0 0 24 24"><path class="ln" stroke="#111" stroke-width="2" d="M12 3v18M3 12h18"/></symbol>
<symbol id="k12" viewBox="0 0 24 24"><path class="ln gr" d="M1 22V9l7-7h8l7 8v7l-7 5zM6 18v-7l4-4h4l4 5-5 1 1 5z"/></symbol>
<symbol id="k13" viewBox="0 0 24 24"><path class="ln gr" d="M1 14h22M6 3l8 20"/><path fill="#8c847c" d="M15 6l6 1-5 9-4-2z"/></symbol>
<symbol id="k14" viewBox="0 0 24 24"><path class="ln gr" d="M1 14h14M6 3l8 20"/><path fill="#8c847c" d="M19 2l4 2-9 12-3 1z"/></symbol>
<symbol id="k15" viewBox="0 0 24 24"><path class="ln gr" d="M1 13h22M7 3l9 10v10"/></symbol>
<symbol id="k16" viewBox="0 0 24 24"><path class="ln gr" d="M3 3v8M21 3v8M3 6h18M6 4L3 6l3 2M18 4l3 2-3 2"/><path fill="#a8a070" stroke="#777" d="M10 7h7l-4 6h5L6 23l4-9H6z"/></symbol>
<symbol id="k17" viewBox="0 0 24 24"><path class="ln gr" d="M2 14L8 3M7 14l6-11M18 12v9M12 21h11"/></symbol>
<symbol id="k18" viewBox="0 0 24 24"><path class="ln gr" d="M2 3h6v10h8V3h6v19H2zM12 0v8M12 11v13"/><path fill="#c06868" d="M1 2h3v3H1zM20 2h3v3h-3z"/></symbol>
<symbol id="k19" viewBox="0 0 24 24"><path fill="#70a088" d="M0 7l5 5-5 6z"/><path class="ln gr" d="M9 13l5-11M14 12l5-10M16 13v9M10 22h12"/></symbol>
<symbol id="k20" viewBox="0 0 24 24"><path class="ln gr" d="M2 2h12v9H2zM11 14h12v9H11z"/><path fill="#8c8c84" d="M18 5l3 2-6 9-3 1zM2 15h6v8H2z"/></symbol>
<symbol id="k21" viewBox="0 0 24 24"><path class="ln" stroke="#889098" stroke-width="2" d="M12 4C6-1 1 4 4 8s5 3 7 0"/><path fill="#8890a0" d="M5 13l9-3 8 3v8l-8 3-9-4z"/><path fill="#808870" d="M19 0l4 3-7 9-3-1z"/></symbol>
<symbol id="k22" viewBox="0 0 24 24"><path class="ln" stroke="#889098" stroke-width="2" d="M13 4C7-1 2 4 5 8s6 4 8 1V6"/><path fill="#8890a0" d="M6 13l9-2 8 3v7l-8 3-9-4z"/></symbol>

<!-- resource bar and tree -->
<symbol id="r1" viewBox="0 0 24 24"><g transform="translate(0 -1) scale(.65)"><use href="#p-box"/></g><g transform="translate(4 4) scale(.6)"><use href="#p-box"/></g><path class="ln" stroke="#18188c" stroke-width="1.500" d="M4 15v8M4 19h7M13 12h10"/><g transform="translate(12 14) scale(.6)"><use href="#p-box"/></g></symbol>
<symbol id="r2" viewBox="0 0 24 24"><path fill="#1818d0" d="M2 1l8 5-8 5zM20 1l-8 5 8 5z"/><path class="ln" stroke="#111" stroke-dasharray="3 1" d="M11 0v24"/><path fill="#fff040" stroke="#222" d="M0 14h8v9H0z"/><path fill="#c01818" stroke="#600" d="M13 14l9 9h-9z"/></symbol>
<symbol id="r3" viewBox="0 0 24 24"><path fill="#e090b8" stroke="#802858" d="M1 3c0-3 9-3 9 0v6c0 3-9 3-9 0z"/><path class="ln" stroke="#18188c" stroke-width="1.500" d="M4 13v9M4 18h7M13 9h10"/><circle cx="17" cy="18" r="4" fill="#f8e8f0" stroke="#802858"/><circle cx="17" cy="18" r="1.500" fill="#802858"/></symbol>
<symbol id="r4" viewBox="0 0 24 24"><path fill="#e87818" d="M0 7h5v16H0z"/><path fill="#30b030" d="M6 7h5v16H6z"/><path fill="#48a0f0" d="M12 7h5v16h-5z"/><path fill="#1858b0" d="M17 7l6-5v15l-6 6z"/><path fill="#fff" stroke="#888" d="M0 7l6-5h5l-6 5zM6 7l6-5h5l-6 5zM12 7l6-5h5l-6 5z"/><path class="ln" stroke="#fff" d="M1 11h3M1 19h3M7 11h3M7 19h3M13 11h3M13 19h3"/></symbol>
<symbol id="r5" viewBox="0 0 24 24"><circle cx="8" cy="15" r="8" fill="#1868c8"/><path fill="#fff" d="M6 9h4v3H6zM5 13h5v6h2v2H5v-2h1v-4H5z"/><path class="ln" stroke="#4878c8" stroke-width="3" d="M8 4c7-1 11 4 11 11M8 0c9-1 15 6 15 15"/></symbol>
<symbol id="r6" viewBox="0 0 24 24"><path fill="#f0f8ff" stroke="#3868a8" d="M3 1h13l5 5v17H3z"/><circle cx="12" cy="14" r="6" fill="#3898a0"/><path fill="#48a838" d="M8 12c3-4 5 0 3 4s-4 0-3-4zM14 11l3 5-3 1z"/></symbol>
<symbol id="r7" viewBox="0 0 24 24"><circle cx="12" cy="12" r="10" fill="#dce8f8" stroke="#555" stroke-width="2"/><path class="ln" stroke="#111" stroke-width="2" d="M12 4v8h6"/></symbol>
<symbol id="r8" viewBox="0 0 24 24"><path fill="#ddd" stroke="#444" d="M1 4l5-3v20l-5 2z"/><path fill="#fff" stroke="#444" d="M8 1h15v18H8z"/><circle cx="12" cy="5" r="2" fill="#2868d8"/><circle cx="12" cy="10" r="2" fill="#28a028"/><circle cx="12" cy="15" r="2" fill="#e02828"/><path class="ln" stroke="#333" d="M15 5h6M15 10h6M15 15h6"/></symbol>
<symbol id="r9" viewBox="0 0 24 24"><path fill="#e02020" d="M1 0h9v5H1z"/><path fill="#f8e020" d="M1 5h9v5H1z"/><path fill="#28d048" d="M1 10h9v5H1z"/><path fill="#20b8e8" d="M1 15h9v4H1z"/><path fill="#1828d0" d="M1 19h9v4H1z"/><circle cx="10" cy="6" r="4" fill="#fff"/><path class="ln" stroke="#111" stroke-width="3" d="M11 8l9 13"/></symbol>
<symbol id="r10" viewBox="0 0 24 24"><path fill="#4890e0" d="M3 3h6v17H3z"/><path class="ln" stroke="#2858c0" stroke-width="1.500" d="M9 7h14M14 12h7M0 17h12"/><circle cx="11" cy="6" r="3" fill="#fff"/><path class="ln" stroke="#111" stroke-width="3" d="M11 8l9 13"/></symbol>
<symbol id="r11" viewBox="0 0 24 24"><circle cx="16" cy="5" r="5" fill="#e8a860"/><path fill="#e8c020" d="M11 4c1-5 9-5 10 0z"/><path fill="#288838" d="M10 17c0-8 13-8 13 0z"/><circle cx="7" cy="13" r="5" fill="#f0c090"/><path fill="#503828" d="M1 14c0-9 12-9 12-1-5-4-8-3-9 4z"/><path fill="#8848c8" d="M0 24c0-8 13-8 13 0z"/></symbol>
<symbol id="r12" viewBox="0 0 24 24"><path fill="#ddd" stroke="#444" d="M1 4l5-3v20l-5 2z"/><path fill="#fff" stroke="#444" d="M8 1h15v18H8z"/><path fill="#e02020" d="M10 4h11v8H10z"/><path fill="#48a0f0" d="M13 4h5v6l-3 2-2-2z"/></symbol>
<symbol id="pinned" viewBox="0 0 12 12"><path class="ln" stroke="#111" d="M0 6h5M5 2v8M11 2v8M5 4c3 2 4 2 6 0M5 8c3-2 4-2 6 0"/><path fill="#f0e840" d="M6 5h4v2H6z"/></symbol>
<symbol id="folder" viewBox="0 0 16 16"><path fill="#e8b838" stroke="#906410" d="M1 3h5l1 2h6v3H4l-3 6z"/><path fill="#ffe08a" stroke="#906410" d="M4 7h11l-3 7H1z"/></symbol>
<symbol id="part" viewBox="0 0 16 16"><use href="#p-box"/></symbol>
<symbol id="asm" viewBox="0 0 16 16"><g transform="translate(-1 -1) scale(.6)"><use href="#p-box"/></g><g transform="translate(0 6) scale(.6)"><use href="#p-box"/></g><g transform="translate(6 5) scale(.62)"><use href="#p-box"/></g></symbol>
<symbol id="lib" viewBox="0 0 16 16"><path fill="#f0dc88" stroke="#c0a040" d="M1 2h6l1 1h6v12H1z"/><path fill="#48b0e0" d="M3 15V8h10v7h-3v-3H6v3z"/></symbol>
</svg>

<header class="title">
  <svg class="logo"><use href="#nxt"/></svg>
  <h1>NX8.0新程教育专业培训网络实体教育*UG/PROE模具设计、PROE产品设计、UG编程、mastercam编程，powerMILL编程*QQ:3179432009 *只讲工厂实战经验，不讲费话*李老师QQ2811794421 微信13532957995 - 建模 - [_model1.prt （ 修改的 ） ]</h1>
  <strong>SIEMENS</strong>
  <div class="win">
    <button aria-label="最小化"><svg viewBox="0 0 16 16"><path fill="#fff" d="M3 11h7v3H3z"/></svg></button>
    <button aria-label="还原"><svg viewBox="0 0 16 16"><path class="ln" stroke="#fff" stroke-width="2" d="M6 6V3h7v7h-3M3 7h7v6H3z"/></svg></button>
    <button class="close" aria-label="关闭"><svg viewBox="0 0 16 16"><path class="ln" stroke="#fff" stroke-width="2" d="M3 3l10 10M13 3L3 13"/></svg></button>
  </div>
</header>

<nav class="menu">
  <span class="grip"></span><svg class="logo"><use href="#cubeb"/></svg>
  <button>文件(<u>F</u>)</button><button>编辑(<u>E</u>)</button><button>视图(<u>V</u>)</button><button>插入(<u>S</u>)</button><button>格式(<u>R</u>)</button><button>工具(<u>T</u>)</button><button>装配(<u>A</u>)</button><button>信息(<u>I</u>)</button><button>分析(<u>L</u>)</button><button>首选项(<u>P</u>)</button><button>窗口(<u>O</u>)</button><button>GC 工具箱</button><button>燕秀UG模具7.05</button><button>帮助(<u>H</u>)</button>
  <div class="win doc">
    <button aria-label="最小化文档"><svg viewBox="0 0 16 16"><path fill="#666" d="M4 11h7v2H4z"/></svg></button>
    <button aria-label="还原文档"><svg viewBox="0 0 16 16"><path class="ln" stroke="#666" stroke-width="2" d="M6 6V3h7v6h-3M4 7h6v6H4z"/></svg></button>
    <button aria-label="关闭文档"><svg viewBox="0 0 16 16"><path class="ln" stroke="#555" stroke-width="3" d="M4 4l8 8M12 4l-8 8"/></svg></button>
  </div>
</nav>

<section class="bars">
<div class="row">
  <div class="bar"><span class="grip"></span>
    <button class="t" aria-label="应用模块"><svg><use href="#nx"/></svg></button><button class="txt start">开始<i class="dn"></i></button>
    <button class="t" aria-label="新建"><svg><use href="#new"/></svg></button><button class="t" aria-label="打开"><svg><use href="#open"/></svg></button><button class="t" aria-label="保存"><svg><use href="#save"/></svg></button><i class="sep"></i>
    <button class="txt imp">导入(<u>M</u>)<i class="dn"></i></button><button class="txt exp">导出(<u>E</u>)<i class="dn"></i></button>
    <button class="t" aria-label="剪切"><svg><use href="#cut"/></svg></button><button class="t" aria-label="复制"><svg><use href="#copy"/></svg></button><button class="t" aria-label="粘贴"><svg><use href="#paste"/></svg></button><i class="sep"></i>
    <button class="t" aria-label="撤消"><svg><use href="#undo"/></svg></button><button class="t" aria-label="重做"><svg><use href="#redo"/></svg></button><i class="sep"></i>
    <button class="txt finder"><svg><use href="#find"/></svg>命令查找器</button>
    <button class="t" aria-label="偏置区域"><svg><use href="#thick"/></svg></button><button class="dd" aria-label="更多"></button><i class="sep"></i>
    <button class="t" aria-label="旋转"><svg><use href="#rot"/></svg></button><button class="t" aria-label="替换"><svg><use href="#swap"/></svg></button><i class="sep"></i>
    <button class="t" aria-label="信息"><svg><use href="#info"/></svg></button><button class="dd low" aria-label="选项"></button></div>
  <div class="bar"><span class="grip"></span>
    <button class="t" aria-label="适合窗口"><svg><use href="#fit"/></svg></button><button class="dd" aria-label="更多"></button>
    <button class="t" aria-label="定向视图"><svg><use href="#orient"/></svg></button><button class="dd" aria-label="更多"></button>
    <button class="t" aria-label="带边着色"><svg><use href="#shade"/></svg></button><button class="dd" aria-label="更多"></button>
    <button class="t" aria-label="着色"><svg><use href="#shade"/></svg></button><button class="t" aria-label="线框"><svg><use href="#wire"/></svg></button><button class="t on" aria-label="艺术外观"><svg><use href="#studio"/></svg></button><button class="t" aria-label="面分析"><svg><use href="#face1"/></svg></button><button class="t" aria-label="局部着色"><svg><use href="#face2"/></svg></button><button class="t" aria-label="编辑截面"><svg><use href="#face3"/></svg></button><button class="dd" aria-label="更多"></button>
    <button class="t" aria-label="背景"><svg><use href="#bg"/></svg></button><button class="dd" aria-label="更多"></button><i class="sep"></i>
    <button class="t" aria-label="显示截面"><svg><use href="#clip"/></svg></button><button class="t" aria-label="剪切截面"><svg><use href="#clip2"/></svg></button><button class="dd low" aria-label="选项"></button></div>
  <div class="bar"><span class="grip"></span>
    <span class="combo layer"><select aria-label="工作图层"><option>1</option></select></span>
    <button class="t" aria-label="图层设置"><svg><use href="#layers"/></svg></button><button class="t" aria-label="WCS 动态"><svg><use href="#wcs1"/></svg></button><button class="t" aria-label="WCS 原点"><svg><use href="#wcs2"/></svg></button><button class="t" aria-label="旋转 WCS"><svg><use href="#wcs3"/></svg></button><button class="t" aria-label="绝对 WCS"><svg viewBox="0 0 24 24"><path class="ln" stroke="#1818c0" stroke-width="2" d="M10 14V1"/><path class="ln" stroke="#18a018" stroke-width="2" d="M10 14l12-6"/><path class="ln" stroke="#c01818" stroke-width="2" d="M10 14l12 5"/><text class="tiny" x="1" y="23">(0,0,0)</text></svg></button><button class="t" aria-label="WCS 方位"><svg><use href="#wcs5"/></svg></button><button class="dd" aria-label="更多"></button><i class="sep"></i>
    <button class="t" aria-label="移动对象"><svg><use href="#hand"/></svg></button><button class="t" aria-label="编辑对象显示"><svg><use href="#key"/></svg></button><i class="sep"></i>
    <button class="t" aria-label="显示和隐藏"><svg><use href="#show"/></svg></button><button class="dd" aria-label="更多"></button><i class="sep"></i>
    <button class="t" aria-label="测量距离"><svg><use href="#dist"/></svg></button><button class="t" aria-label="测量角度"><svg><use href="#angle"/></svg></button><button class="dd low" aria-label="选项"></button></div>
</div>
<div class="row">
  <div class="bar"><span class="grip"></span>
    <button class="t" aria-label="草图"><svg><use href="#sketch"/></svg></button><button class="dd" aria-label="更多"></button>
    <button class="t" aria-label="拉伸"><svg><use href="#extr"/></svg></button><button class="t" aria-label="回转"><svg><use href="#rev"/></svg></button><button class="t" aria-label="孔"><svg><use href="#hole"/></svg></button><button class="t" aria-label="凸起"><svg><use href="#emb"/></svg></button><button class="t" aria-label="偏置"><svg><use href="#off"/></svg></button><i class="sep"></i>
    <button class="t" aria-label="阵列"><svg><use href="#patt"/></svg></button><button class="t" aria-label="投影曲线"><svg><use href="#proj"/></svg></button><button class="t" aria-label="组合曲线"><svg><use href="#curv"/></svg></button><button class="t" aria-label="曲线投影"><svg><use href="#trimp"/></svg></button><button class="t" aria-label="偏置面"><svg><use href="#cyl1"/></svg></button><button class="t" aria-label="偏置曲面"><svg><use href="#cylax"/></svg></button><button class="t" aria-label="相交曲线"><svg><use href="#inter"/></svg></button><button class="t" aria-label="加厚"><svg><use href="#thick"/></svg></button><button class="t" aria-label="移动"><svg><use href="#mv"/></svg></button><button class="t" aria-label="求和"><svg><use href="#unite"/></svg></button><button class="dd" aria-label="更多"></button>
    <button class="t" aria-label="缝合"><svg><use href="#pair"/></svg></button><button class="t" aria-label="拆分体"><svg><use href="#boxs"/></svg></button><button class="t" aria-label="修剪体"><svg><use href="#boxo"/></svg></button><button class="t" aria-label="分割面"><svg><use href="#bend"/></svg></button><button class="t" aria-label="管道"><svg><use href="#tube"/></svg></button><button class="t" aria-label="片体"><svg><use href="#plate"/></svg></button><button class="t" aria-label="腔体"><svg><use href="#pocket"/></svg></button><button class="t" aria-label="补片"><svg><use href="#cyl2"/></svg></button><button class="t" aria-label="抽壳"><svg><use href="#shell"/></svg></button><i class="sep"></i>
    <button class="t" aria-label="边倒圆"><svg><use href="#blend"/></svg></button><button class="t" aria-label="面倒圆"><svg><use href="#swp"/></svg></button><button class="t" aria-label="软倒圆"><svg><use href="#swp"/></svg></button><button class="t" aria-label="抽取体"><svg><use href="#cs"/></svg></button><button class="t" aria-label="圆锥"><svg><use href="#cone"/></svg></button><button class="t" aria-label="球"><svg><use href="#ball"/></svg></button><button class="t" aria-label="包容体"><svg><use href="#redbox"/></svg></button><button class="t" aria-label="包容块"><svg><use href="#yelbox"/></svg></button><button class="t" aria-label="长方体"><svg><use href="#block"/></svg></button><button class="t" aria-label="圆柱"><svg><use href="#cyl"/></svg></button><button class="t" aria-label="倒斜角"><svg><use href="#cham"/></svg></button><button class="t" aria-label="拔模"><svg><use href="#pyr"/></svg></button><button class="t" aria-label="缩放体"><svg><use href="#gem"/></svg></button><button class="dd low" aria-label="选项"></button></div>
  <div class="bar"><span class="grip"></span>
    <button class="t" aria-label="直纹"><svg><use href="#surf1"/></svg></button><button class="t" aria-label="通过曲线网格"><svg><use href="#surf2"/></svg></button><button class="t" aria-label="艺术曲面"><svg><use href="#measc"/></svg></button><button class="t" aria-label="N 边曲面"><svg><use href="#surf3"/></svg></button><button class="t" aria-label="扩大"><svg><use href="#surf4"/></svg></button><button class="t" aria-label="修剪片体"><svg><use href="#surf5"/></svg></button><button class="t" aria-label="X 成形"><svg><use href="#flag"/></svg></button><button class="dd" aria-label="更多"></button><button class="dd low" aria-label="选项"></button></div>
</div>
<div class="row">
  <div class="bar"><span class="grip"></span>
    <button class="t zi">字</button><button class="t" aria-label="尺寸"><svg><use href="#xdim"/></svg></button><button class="t" aria-label="方块框"><svg><use href="#cube0"/></svg></button><button class="t" aria-label="方块"><svg><use href="#cube1"/></svg></button><button class="t" aria-label="颜色"><svg><use href="#pal"/></svg></button><button class="t" aria-label="清理"><svg><use href="#brush"/></svg></button><i class="sep"></i>
    <button class="t" aria-label="工件"><svg><use href="#redcube"/></svg></button><button class="t" aria-label="外框"><svg><use href="#frame"/></svg></button><button class="t" aria-label="拆分"><svg><use href="#split"/></svg></button><i class="sep"></i>
    <button class="t" aria-label="旋转"><svg><use href="#rotp"/></svg></button><button class="t" aria-label="复制移动"><svg><use href="#twob"/></svg></button><button class="t" aria-label="测量"><svg><use href="#bruler"/></svg></button><button class="t" aria-label="中心"><svg><use href="#cross"/></svg></button><button class="t" aria-label="坐标系"><svg><use href="#axes"/></svg></button><button class="t" aria-label="摆正"><svg viewBox="0 0 24 24"><text class="f8" x="0" y="15">F8</text><path class="ln gold" d="M14 20l3 3M17 20l-3 3M21 15v2M23 15v8h-4"/></svg></button><button class="t" aria-label="线型"><svg><use href="#xline"/></svg></button><button class="dd low" aria-label="选项"></button></div>
  <div class="bar"><span class="grip"></span>
    <button class="t" aria-label="布局"><svg><use href="#grid1"/></svg></button><button class="t" aria-label="布局移动"><svg><use href="#grid2"/></svg></button><i class="sep"></i>
    <button class="t" aria-label="模架"><svg><use href="#mb"/></svg></button><button class="t" aria-label="镶件"><svg><use href="#ybr"/></svg></button><button class="t" aria-label="定位环"><svg><use href="#flower"/></svg></button><i class="sep"></i>
    <button class="t" aria-label="支撑柱"><svg><use href="#col"/></svg></button><button class="t" aria-label="螺钉"><svg><use href="#bolt"/></svg></button><button class="t" aria-label="圆盘"><svg><use href="#target"/></svg></button><button class="t" aria-label="浇口套"><svg><use href="#tt"/></svg></button><button class="t" aria-label="弹簧"><svg><use href="#spring"/></svg></button><button class="t" aria-label="垫块"><svg><use href="#blk1"/></svg></button><button class="t" aria-label="锁块"><svg><use href="#blk2"/></svg></button><button class="t" aria-label="拉杆"><svg><use href="#pin1"/></svg></button><button class="t" aria-label="顶针"><svg><use href="#pin2"/></svg></button><button class="t" aria-label="模板"><svg><use href="#plate4"/></svg></button><i class="sep"></i>
    <button class="t" aria-label="键"><svg><use href="#pill"/></svg></button><button class="t" aria-label="滑块"><svg><use href="#wedge"/></svg></button><button class="t" aria-label="压块"><svg><use href="#pill2"/></svg></button><button class="t" aria-label="斜顶"><svg><use href="#lifter"/></svg></button><button class="dd low" aria-label="选项"></button></div>
  <div class="bar"><span class="grip"></span>
    <button class="t" aria-label="约束"><svg><use href="#xd2"/></svg></button><button class="t" aria-label="收缩体"><svg><use href="#mesh"/></svg></button><button class="t" aria-label="移动面"><svg><use href="#sy1"/></svg></button><button class="dd" aria-label="更多"></button>
    <button class="t" aria-label="移动区域"><svg><use href="#sy1"/></svg></button><button class="t" aria-label="拉出面"><svg><use href="#sy2"/></svg></button><button class="t" aria-label="偏置区域"><svg><use href="#sy3"/></svg></button><button class="t" aria-label="调整面大小"><svg><use href="#sy4"/></svg></button><button class="t" aria-label="替换面"><svg><use href="#sy5"/></svg></button><button class="t" aria-label="调整圆角大小"><svg><use href="#sy6"/></svg></button><button class="dd" aria-label="更多"></button>
    <button class="t" aria-label="删除面"><svg><use href="#sy7"/></svg></button><button class="t" aria-label="线性尺寸"><svg><use href="#sy8"/></svg></button><button class="dd" aria-label="更多"></button>
    <button class="t" aria-label="壳体"><svg><use href="#sy9"/></svg></button><button class="dd low" aria-label="选项"></button></div>
</div>
</section>

<section class="sel">
  <span class="combo filter"><select aria-label="类型过滤器"><option>实体</option></select></span>
  <span class="combo scope"><select aria-label="选择范围"><option>整个装配</option></select></span>
  <button class="t" aria-label="关联"><svg><use href="#s1"/></svg></button><i class="sep"></i>
  <button class="t" aria-label="过滤器"><svg><use href="#s2"/></svg></button><button class="dd" aria-label="更多"></button><button class="t" aria-label="返回"><svg><use href="#s3"/></svg></button><button class="t" aria-label="全部"><svg><use href="#s4"/></svg></button><button class="t" aria-label="上一个"><svg><use href="#s5"/></svg></button><button class="t" aria-label="查找"><svg><use href="#s6"/></svg></button><i class="sep"></i>
  <button class="t" aria-label="矩形选择"><svg><use href="#s7"/></svg></button><button class="dd" aria-label="更多"></button><i class="sep"></i>
  <button class="t" aria-label="启用捕捉点"><svg><use href="#s8"/></svg></button><button class="t" aria-label="控制点"><svg><use href="#s9"/></svg></button><button class="t" aria-label="端点"><svg><use href="#s10"/></svg></button><button class="t" aria-label="中点"><svg><use href="#s11"/></svg></button><button class="t" aria-label="极点"><svg><use href="#s12"/></svg></button><button class="t" aria-label="交点"><svg><use href="#s13"/></svg></button><button class="t" aria-label="圆弧中心"><svg><use href="#s14"/></svg></button><button class="t" aria-label="象限点"><svg><use href="#s15"/></svg></button><button class="t" aria-label="现有点"><svg><use href="#s16"/></svg></button><button class="t" aria-label="曲线上的点"><svg><use href="#s17"/></svg></button><button class="t" aria-label="面上的点"><svg><use href="#s18"/></svg></button><i class="sep"></i>
  <button class="note"><svg><use href="#shade"/></svg>需要更多模具资料请加微信<span class="num">13532957995 /18025172850</span><i class="dn"></i></button>
  <button class="dd end" aria-label="选项"></button>
</section>

<section class="status">
  <div class="cue"></div><output>'MAD-03' 已选定</output><span class="cell"></span><span class="cell wide"></span>
  <div class="tail"><svg viewBox="0 0 16 16"><path fill="#8a9694" d="M0 0h16v16H0z"/><path class="ln" stroke="#6c7876" d="M3 4l4 8M7 3l5 7M3 9l9-4"/></svg><svg viewBox="0 0 16 16"><path class="ln" stroke="#111" d="M1 4V1h3M12 1h3v3M15 12v3h-3M4 15H1v-3"/><path fill="#f4f8ff" stroke="#333" d="M3 4h10v9H3z"/><path fill="#4a98e0" d="M5 6h6v5H5z"/></svg></div>
</section>

<main>
  <nav class="tabs" aria-label="资源条">
    <button class="active" aria-label="装配导航器"><svg><use href="#r1"/></svg></button><button aria-label="约束导航器"><svg><use href="#r2"/></svg></button><button aria-label="部件导航器"><svg><use href="#r3"/></svg></button><button aria-label="重用库"><svg><use href="#r4"/></svg></button><button class="gap" aria-label="HD3D 工具"><svg><use href="#r5"/></svg></button><button class="gap" aria-label="浏览器"><svg><use href="#r6"/></svg></button><button class="gap" aria-label="历史记录"><svg><use href="#r7"/></svg></button><button aria-label="系统材料"><svg><use href="#r8"/></svg></button><button aria-label="可视化向导"><svg><use href="#r9"/></svg></button><button aria-label="加工向导"><svg><use href="#r10"/></svg></button><button aria-label="角色"><svg><use href="#r11"/></svg></button><button aria-label="系统场景"><svg><use href="#r12"/></svg></button>
  </nav>
  <aside>
    <h2><svg><use href="#pinned"/></svg>装配导航器</h2>
    <div class="list">
      <div class="head">描述性部件名</div>
      <ul class="tree">
        <li class="l1"><svg><use href="#folder"/></svg>截面</li>
        <li class="l1 root"><button class="fold" aria-label="折叠"></button><input type="checkbox" id="m0" checked><svg><use href="#asm"/></svg><label for="m0">_model1</label></li>
        <li class="l2 cur"><input type="checkbox" id="m3" checked><svg><use href="#part"/></svg><label for="m3">MAD-03</label>
          <svg class="cursor" viewBox="0 0 12 19"><path fill="#fff" stroke="#222" d="M1 1v15l3-3 3 5 2-1-2-5h4z"/></svg></li>
        <li class="l2"><input type="checkbox" id="m2" checked><svg><use href="#part"/></svg><label for="m2">MAD-02</label></li>
        <li class="l2"><input type="checkbox" id="m1" checked><svg><use href="#part"/></svg><label for="m1">MAD-01</label></li>
      </ul>
      <div class="scroll"><i class="la"></i><span class="thumb"></span><i class="ra"></i></div>
    </div>
    <div class="split"><i></i></div>
    <button class="fold-row"><span>预览</span><svg viewBox="0 0 12 10"><path d="M0 0h4l2 5 2-5h4L7 10H5z"/></svg></button>
    <button class="fold-row"><span>相依性</span><svg viewBox="0 0 12 10"><path d="M0 0h4l2 5 2-5h4L7 10H5z"/></svg></button>
  </aside>
  <section class="view">
    <svg class="model" viewBox="0 0 1652 809" role="img" aria-label="球体模型">
      <defs>
        <linearGradient id="mGrey" gradientUnits="userSpaceOnUse" x1="0" y1="134" x2="0" y2="510"><stop offset="0" stop-color="#abc4cc"/><stop offset=".12" stop-color="#c6dfe6"/><stop offset=".3" stop-color="#b2c9d1"/><stop offset=".5" stop-color="#84969d"/><stop offset=".7" stop-color="#647174"/><stop offset=".88" stop-color="#475154"/><stop offset="1" stop-color="#343a3e"/></linearGradient>
        <linearGradient id="mSide" gradientUnits="userSpaceOnUse" x1="300" y1="200" x2="420" y2="235"><stop offset="0" stop-color="#66777e" stop-opacity=".7"/><stop offset="1" stop-color="#66777e" stop-opacity="0"/></linearGradient>
        <radialGradient id="mGlow" gradientUnits="userSpaceOnUse" cx="436" cy="250" r="85"><stop offset="0" stop-color="#dcf2f8"/><stop offset="1" stop-color="#c0d8e0" stop-opacity="0"/></radialGradient>
        <linearGradient id="mOr" gradientUnits="userSpaceOnUse" x1="0" y1="176" x2="0" y2="521"><stop offset="0" stop-color="#ffc850"/><stop offset=".2" stop-color="#ffcb60"/><stop offset=".43" stop-color="#ffa64c"/><stop offset=".56" stop-color="#dc8d41"/><stop offset=".68" stop-color="#b07132"/><stop offset=".8" stop-color="#7f5125"/><stop offset=".9" stop-color="#62401c"/><stop offset="1" stop-color="#5e3d1a"/></linearGradient>
        <radialGradient id="mHi" gradientUnits="userSpaceOnUse" cx="614" cy="258" r="80"><stop offset="0" stop-color="#ffff92"/><stop offset=".3" stop-color="#fff17e" stop-opacity=".85"/><stop offset="1" stop-color="#ffc860" stop-opacity="0"/></radialGradient>
        <radialGradient id="mHi2" gradientUnits="userSpaceOnUse" cx="455" cy="256" r="90"><stop offset="0" stop-color="#ffe478"/><stop offset="1" stop-color="#ffc860" stop-opacity="0"/></radialGradient>
        <radialGradient id="mEdge" gradientUnits="userSpaceOnUse" cx="514" cy="328" r="228" gradientTransform="matrix(1 0 0 .85 0 49)"><stop offset=".8" stop-color="#6a4010" stop-opacity="0"/><stop offset="1" stop-color="#6a4010" stop-opacity=".4"/></radialGradient>
        <ellipse id="hull" cx="514" cy="328" rx="228" ry="194"/>
        <path id="skin" d="M473 202Q476 206 483 203 528 182 573 176L580 180Q602 208 616 225C655 230 718 250 735 302L741 340A228 194 0 0 1 444 513C415 505 403 489 396 472 383 440 380 400 391 355 405 300 435 250 473 202z"/>
      </defs>
      <use href="#hull" fill="url(#mGrey)"/><use href="#hull" fill="url(#mSide)"/><use href="#hull" fill="url(#mGlow)"/>
      <path class="ln" stroke="#303c40" d="M444 143l11-1 13 6 1 47q1 6 5 8M290 375q28 52 96 74"/>
      <path fill="#3d4a4c" d="M735 292l4 0 3 43-1 2z"/>
      <use href="#skin" fill="url(#mOr)"/><use href="#skin" fill="url(#mHi2)"/><use href="#skin" fill="url(#mHi)"/><use href="#skin" fill="url(#mEdge)"/>
      <path class="ln" stroke="#f79b42" stroke-width="2" d="M444 513C415 505 403 489 396 472 383 440 380 400 391 355 405 300 435 250 473 202Q476 206 483 203 528 182 573 176L580 180Q602 208 616 225C655 230 718 250 735 302L741 340"/>
      <path class="ln" stroke="#3a3020" stroke-dasharray="5 8" d="M401 326C412 290 440 245 473 202M580 180l36 45"/>
      <path class="ln" stroke="#e8a040" d="M437 261l-13 24-3 3M439 263l-12 24h-4"/>
      <circle cx="568" cy="452" r="5" fill="#f79b42"/>
      <path fill="#ffc04c" stroke="#f79b42" stroke-width="2" d="M747 293l42-9 2 5-42 9z"/><path fill="#cfe0e4" d="M768 294l22-3 1 5-24 1z"/><path fill="#3f4a4b" stroke="#202828" d="M750 298l42-4 5 32-41 3z"/><path class="ln" stroke="#f79b42" stroke-width="2" d="M747 294l8 35"/>
    </svg>
  </section>
</main>

<section class="foot">
  <div class="bar"><span class="grip"></span>
    <button class="t" aria-label="任务环境草图"><svg><use href="#k1"/></svg></button><button class="txt fin" disabled><svg><use href="#k2"/></svg>完成草图</button><button class="t" aria-label="轮廓"><svg><use href="#k3"/></svg></button><button class="t" aria-label="直线"><svg><use href="#k4"/></svg></button><button class="t" aria-label="圆弧"><svg><use href="#k5"/></svg></button><button class="t" aria-label="圆"><svg><use href="#k6"/></svg></button><button class="t" aria-label="圆角"><svg><use href="#k7"/></svg></button><button class="t" aria-label="倒斜角"><svg><use href="#k8"/></svg></button><button class="t" aria-label="矩形"><svg><use href="#k9"/></svg></button><button class="t" aria-label="艺术样条"><svg><use href="#k10"/></svg></button><button class="t" aria-label="点"><svg><use href="#k11"/></svg></button><button class="t" aria-label="偏置曲线"><svg><use href="#k12"/></svg></button><button class="dd" aria-label="更多"></button><i class="sep"></i>
    <button class="t" aria-label="快速修剪"><svg><use href="#k13"/></svg></button><button class="t" aria-label="快速延伸"><svg><use href="#k14"/></svg></button><button class="t" aria-label="制作拐角"><svg><use href="#k15"/></svg></button><i class="sep"></i>
    <button class="t" aria-label="自动判断尺寸"><svg><use href="#k16"/></svg></button><button class="dd" aria-label="更多"></button><i class="sep"></i>
    <button class="t" aria-label="约束"><svg><use href="#k17"/></svg></button><button class="t" aria-label="设为对称"><svg><use href="#k18"/></svg></button><button class="t" aria-label="显示约束"><svg><use href="#k19"/></svg></button><button class="dd" aria-label="更多"></button><i class="sep"></i>
    <button class="t" aria-label="转换"><svg><use href="#k20"/></svg></button><button class="t" aria-label="备选解"><svg><use href="#k21"/></svg></button><button class="t" aria-label="更新模型"><svg><use href="#k22"/></svg></button><button class="dd low" aria-label="选项"></button></div>
</section>

<footer class="task">
  <button class="orb" aria-label="开始菜单"><svg viewBox="0 0 34 32"><circle cx="17" cy="15" r="16" fill="url(#gOrb)" stroke="#2c4c64"/><path fill="#f0682c" d="M10 6c2-2 5-2 7 0l-2 7c-2-2-5-2-7 0z"/><path fill="#8cc63c" d="M18 7c3 1 5 1 8 0l-2 7c-3 1-5 1-8 0z"/><path fill="#38a8e8" d="M8 15c2-2 5-2 7 0l-2 7c-2-2-5-2-7 0z"/><path fill="#fcc82c" d="M16 16c3 1 5 1 8 0l-2 7c-3 1-5 1-8 0z"/></svg></button>
  <button class="app active" aria-label="NX 8.0"><svg viewBox="0 0 24 24"><use href="#nxt"/></svg></button>
  <button class="app" aria-label="资源管理器"><svg viewBox="0 0 16 16"><use href="#lib"/></svg></button>
  <div class="desk"><a href="#desktop">桌面</a><a href="#library"><svg><use href="#lib"/></svg>库</a></div>
  <div class="tray">
    <button class="more" aria-label="显示更多">»</button>
    <svg viewBox="0 0 16 16"><path fill="#ece8dc" stroke="#666" d="M1 6h14v8H1z"/><path class="ln" stroke="#555" stroke-dasharray="1 1" d="M3 8.500h10M3 11.500h10"/><path class="ln" stroke="#444" d="M8 6c0-3 2-3 5-4"/></svg>
    <svg viewBox="0 0 16 16" class="help"><circle cx="8" cy="8" r="7" fill="#08088c" stroke="#c8d0e8"/><text class="ask" x="5" y="12">?</text></svg>
    <svg viewBox="0 0 10 24" class="slim"><path class="ln" stroke="#fff" d="M3 5V2h6v4H7M1 4h6v4H1z"/><path fill="#fff" d="M1 17h7l-3.500 4z"/></svg>
    <svg viewBox="0 0 16 16"><path fill="#28a0f0" d="M1 0l15 8-15 8z"/><path fill="#f8a020" d="M1 9l14 0-14 7z"/><path fill="#58c838" d="M1 4l6 4-1 5-5 2z"/><path fill="#fff" d="M5 4l6 4-6 4z"/></svg>
    <svg viewBox="0 0 16 16"><path fill="#20d838" d="M0 2h16v12H0z"/><path class="ln" stroke="#101060" stroke-width="2" d="M1 8h2l2-5 2 10 2-9 2 8 2-4h3"/><path class="ln" stroke="#e02020" d="M7 4l4 9"/></svg>
    <svg viewBox="0 0 16 16"><path class="ln" stroke="#fff" stroke-width="2" d="M2 1v15"/><path fill="#fff" d="M3 2h10v7H3z"/><circle cx="11" cy="11" r="5" fill="#d82818"/><path class="ln" stroke="#fff" stroke-width="2" d="M9 9l4 4M13 9l-4 4"/></svg>
    <svg viewBox="0 0 16 16"><path fill="#1c74e0" stroke="#fff" d="M1 2q4 1 7-1 3 2 7 1c0 8-3 11-7 14C4 13 1 10 1 2z"/><path class="ln" stroke="#fff" stroke-width="2" d="M4 6l4 4 4-4"/></svg>
    <svg viewBox="0 0 16 16"><path fill="#d8dce0" stroke="#666" d="M2 1h5v4h2v6H6v4H4v-4H1V5h1z"/><circle cx="11" cy="11" r="5" fill="#28a038"/><path class="ln" stroke="#fff" stroke-width="2" d="M8 11l2 2 4-4"/></svg>
    <svg viewBox="0 0 16 16"><path fill="#e8ecf0" stroke="#445" d="M1 5h3l4-4v14l-4-4H1z"/><path class="ln" stroke="#fff" d="M10 5q2 3 0 6M12 3q4 5 0 10"/></svg>
    <svg viewBox="0 0 16 16"><path fill="#fff" d="M0 12h2v3H0zM3 10h2v5H3zM6 8h2v7H6zM9 5h3v10H9zM13 2h3v13h-3z"/></svg>
    <time>21:11</time>
  </div>
  <button class="peek" aria-label="显示桌面"></button>
</footer>
</body>
</html>
```
FILE: styles.css
```css
* { box-sizing: border-box; }

body {
  margin: 0;
  min-height: 100vh;
  display: flex;
  flex-direction: column;
  overflow: hidden;
  background: #d4d4d4;
  color: #000;
  font: 12px/16px "Noto Sans", "Noto Sans CJK SC", sans-serif;
}

button {
  margin: 0;
  padding: 0;
  border: 0;
  background: none;
  color: inherit;
  font: inherit;
  white-space: nowrap;
}

.sprite { position: absolute; width: 0; height: 0; }
.ln { fill: none; }
.gold { stroke: #b8681c; }
.sky { stroke: #1c84d6; }
.gr { stroke: #8c8c8c; stroke-width: 1px; }
.g { fill: #ffdf70; stroke: #b8681c; }
.s { fill: #cfe6ff; stroke: #1c84d6; }
.tiny { font-size: 7px; }
.f8 { font-size: 17px; fill: #c07830; }
.ask { font-size: 11px; font-weight: 700; fill: #fff; }

/* title bar */
.title {
  display: flex;
  align-items: center;
  height: 22px;
  padding-left: 2px;
  background: linear-gradient(#000 1px, #555 2px, #3c3c3c 7px, #141414 9px, #1c1c1c);
  color: #fff;
}
.logo { flex: none; width: 18px; height: 18px; }
.title h1 {
  flex: 1;
  margin: 0 0 0 5px;
  font-size: 12px;
  font-weight: 400;
  white-space: nowrap;
}
.title strong { margin-right: 28px; font: 900 13px/16px "Noto Sans", sans-serif; }
.win { display: flex; gap: 4px; padding-right: 2px; }
.win button {
  width: 18px;
  height: 18px;
  border: 1px solid #777;
  border-radius: 2px;
  background: linear-gradient(#888, #444 50%, #222);
}
.win svg { display: block; width: 16px; height: 16px; }
.win .close { border-color: #e8a090; background: linear-gradient(#f09080, #d83c28 50%, #b82010); }

/* menu bar */
.menu {
  display: flex;
  align-items: center;
  height: 27px;
  background: #e4e4e4;
  border-bottom: 1px solid #c4c4c4;
}
.menu > button { padding: 0 6px; }
.menu .logo { margin-right: -2px; }
.menu .win { margin-left: auto; padding-right: 4px; gap: 2px; }
.menu .win button {
  width: 17px;
  height: 17px;
  border: 1px solid #777;
  background: linear-gradient(#fff, #d8d8d8);
}
.menu .win svg { width: 15px; height: 15px; }

.grip {
  flex: none;
  width: 8px;
  height: 26px;
  background: repeating-linear-gradient(#a4a4a4 0 2px, #f0f0f0 2px 3px, transparent 3px 4px) 4px 0 / 2px 100% no-repeat;
}

/* toolbars */
.bars { background: linear-gradient(#d8d8d8, #cacaca); border-bottom: 2px solid #9c9c9c; }
.row { display: flex; height: 34px; }
.bar {
  display: flex;
  align-items: center;
  height: 34px;
  border-top: 1px solid #f4f4f4;
  border-bottom: 1px solid #c0c0c0;
  background: linear-gradient(#e0e0e0, #d2d2d2);
  box-shadow: inset -1px 0 #bbb;
}
.t {
  flex: none;
  display: flex;
  align-items: center;
  justify-content: center;
  width: 31px;
  height: 31px;
}
.t svg, .txt svg { flex: none; width: 24px; height: 24px; }
.t.on { border: 1px solid #333; background: #fff; }
.t.zi { color: #5068d8; font-size: 24px; line-height: 28px; }
.sep {
  flex: none;
  width: 6px;
  height: 30px;
  background: linear-gradient(90deg, #b4b4b4 50%, #fafafa 50%) 2px 0 / 2px 100% no-repeat;
}
.dn, .dd::before {
  display: block;
  flex: none;
  width: 7px;
  height: 4px;
  background: #000;
  clip-path: polygon(0 0, 100% 0, 50% 100%);
  content: "";
}
.dd {
  flex: none;
  display: flex;
  align-items: center;
  justify-content: center;
  width: 12px;
  height: 30px;
}
.dd.low { width: 14px; align-items: flex-end; padding-bottom: 5px; }
.txt { display: flex; align-items: center; gap: 4px; height: 30px; }
.start { width: 36px; }
.imp { width: 56px; padding-left: 2px; }
.exp { width: 50px; padding-left: 1px; }
.finder { width: 96px; padding-left: 4px; }
.start { gap: 2px; }
.imp, .exp { gap: 1px; }

/* drop-down lists */
.combo {
  flex: none;
  display: flex;
  position: relative;
  height: 19px;
  border: 1px solid #555;
  border-radius: 3px;
  background: #fff;
  overflow: hidden;
}
.combo::after {
  position: absolute;
  top: 0;
  right: 0;
  width: 17px;
  height: 100%;
  background: linear-gradient(#b8d8f8, #4c8cd8);
  content: "";
  pointer-events: none;
}
.combo::before {
  position: absolute;
  z-index: 1;
  top: 5px;
  right: 3px;
  width: 11px;
  height: 7px;
  background: #0a1830;
  clip-path: polygon(0 0, 100% 0, 50% 100%);
  content: "";
  pointer-events: none;
}
.combo select {
  width: 100%;
  padding: 0 2px;
  border: 0;
  background: none;
  color: inherit;
  font: inherit;
  appearance: none;
}
.layer { width: 46px; margin: 0 5px 0 4px; }
.filter { width: 143px; margin-right: 9px; }
.scope { width: 149px; margin-right: 6px; }

/* selection bar */
.sel {
  display: flex;
  align-items: center;
  height: 29px;
  padding: 0 0 2px 5px;
  background: linear-gradient(#c2c2c2, #dadada);
  border-bottom: 1px solid #bbb;
}
.sel .t { width: 23px; height: 24px; }
.sel .t svg, .note svg { width: 17px; height: 17px; }
.sel .sep { height: 25px; }
.sel .dd { width: 10px; }
.sel .dd.end { margin-left: auto; width: 20px; padding-top: 16px; }
.note { display: flex; align-items: center; padding-left: 3px; }
.note svg { margin-right: 5px; }
.num { margin-right: 6px; font-size: 14px; }

/* status line */
.status {
  display: flex;
  height: 23px;
  border-top: 1px solid #f4f4f4;
  border-bottom: 2px solid #8c8c8c;
  background: #d8d8d8;
}
.cue { flex: 0 0 911px; border-right: 1px solid #f8f8f8; }
.status output { flex: 1; padding: 1px 7px; font-size: 13px; font-weight: 600; }
.cell { width: 20px; border-left: 1px solid #f4f4f4; }
.cell.wide { width: 36px; }
.tail { display: flex; align-items: center; gap: 5px; padding: 0 3px 0 2px; border-left: 1px solid #f4f4f4; }
.tail svg { width: 16px; height: 16px; }
.tail svg + svg { width: 13px; height: 15px; }

/* work area */
main { flex: 1; display: flex; min-height: 0; }
.tabs {
  flex: none;
  display: flex;
  flex-direction: column;
  align-items: flex-end;
  gap: 2px;
  width: 33px;
  padding-top: 14px;
  background: linear-gradient(#9c9c9c, #b4b4b4 40px);
  box-shadow: inset -1px 0 #777;
}
.tabs button {
  width: 26px;
  height: 40px;
  border: 1px solid #666;
  border-right: 0;
  border-radius: 3px 0 0 3px;
  background: linear-gradient(#e0e0e0, #ccc);
}
.tabs svg { width: 22px; height: 24px; }
.tabs .active { width: 28px; height: 44px; background: #ebebeb; }
.tabs .gap { margin-top: 12px; }

aside {
  flex: none;
  display: flex;
  flex-direction: column;
  width: 236px;
  padding: 0 9px 4px;
  border-right: 1px solid #888;
  border-bottom: 1px solid #888;
  background: #ebebeb;
}
aside h2 {
  display: flex;
  align-items: center;
  gap: 12px;
  height: 34px;
  margin: 0;
  padding: 4px 0 0 5px;
  font-size: 13px;
  font-weight: 700;
}
aside h2 svg { width: 12px; height: 12px; }
.list {
  flex: 1;
  display: flex;
  flex-direction: column;
  border: 1px solid #666;
  padding: 1px;
  background: #fff;
}
.head {
  height: 19px;
  padding: 1px 6px;
  border-bottom: 1px solid #888;
  background: linear-gradient(#f4f4f4, #dcdcdc);
}
.tree {
  flex: 1;
  margin: 0;
  padding: 0;
  list-style: none;
  background: repeating-linear-gradient(#fff 0 19px, #e4e4e4 19px 20px, #f6f6f6 20px 39px, #e4e4e4 39px 40px);
}
.tree li {
  position: relative;
  display: flex;
  align-items: center;
  height: 20px;
  color: #333;
}
.tree li svg { flex: none; width: 16px; height: 16px; margin-right: 3px; }
.tree label { flex: 1; font-size: 13px; line-height: 19px; }
.l1 { padding-left: 19px; }
.root { padding-left: 4px; }
.tree .root svg { margin-right: 1px; }
.l2 { padding-left: 39px; }
.l2::before {
  position: absolute;
  top: 0;
  left: 28px;
  width: 10px;
  height: 10px;
  border: dotted #999;
  border-width: 0 0 1px 1px;
  content: "";
}
.l2 label { padding-left: 3px; }
.tree .l2 svg { margin-right: 0; }
.cur label { background: #3399ff; color: #fff; outline: 1px dotted #c87830; outline-offset: -1px; }
.tree li .cursor { position: absolute; z-index: 1; top: 11px; left: 103px; width: 13px; height: 20px; }
.fold {
  width: 9px;
  height: 9px;
  margin-right: 8px;
  border: 1px solid #888;
  border-radius: 1px;
  background: linear-gradient(#333, #333) center / 5px 1px no-repeat #fff;
}
.tree input {
  flex: none;
  width: 13px;
  height: 13px;
  margin: 0 2px 0 0;
  border: 1px solid #222;
  background: #fff;
  appearance: none;
}
.tree input:checked::before {
  display: block;
  width: 11px;
  height: 11px;
  background: #d81c28;
  clip-path: polygon(5% 40%, 25% 35%, 42% 60%, 90% 0, 100% 18%, 45% 100%);
  content: "";
}
.scroll { display: flex; align-items: center; height: 16px; padding: 0 6px; background: #efefef; }
.la, .ra { width: 5px; height: 8px; background: #333; }
.la { margin-right: 8px; clip-path: polygon(100% 0, 100% 100%, 0 50%); }
.ra { margin-left: auto; clip-path: polygon(0 0, 100% 50%, 0 100%); }
.thumb {
  width: 76px;
  height: 14px;
  border: 1px solid #999;
  background:
    repeating-linear-gradient(90deg, #666 0 1px, transparent 1px 3px) center / 8px 6px no-repeat,
    linear-gradient(#f4f4f4, #ccc);
}
.split { display: flex; align-items: center; justify-content: center; height: 12px; }
.split::before, .split::after { flex: 1; height: 1px; background: #c0c0c0; content: ""; }
.split i { width: 37px; height: 5px; margin: 0 4px; border: 1px solid #aaa; background: #d0d0d0; }
.fold-row {
  display: flex;
  align-items: center;
  height: 23px;
  border-right: 1px solid #999;
  border-bottom: 1px solid #999;
  background: linear-gradient(#f4f4f4 50%, #d4d4d4);
  font-size: 13px;
  font-weight: 700;
  text-align: left;
}
.fold-row span { flex: 1; padding-left: 6px; }
.fold-row svg { width: 23px; height: 21px; padding: 5px; fill: #666; border-left: 1px solid #aaa; }

.view {
  flex: 1;
  min-width: 0;
  background: linear-gradient(#b5b6b7, #cdcecf 40%, #e4e5e6 80%, #e9eaeb);
}
.model { display: block; width: 100%; height: 100%; }

/* sketch toolbar */
.foot { display: flex; height: 35px; padding-left: 374px; background: linear-gradient(#e4e4e4, #ccc); }
.foot .bar { border-bottom: 0; background: linear-gradient(#e6e6e6, #d2d2d2); }
.fin { width: 82px; padding-left: 3px; gap: 3px; color: #888; }

/* desktop task bar */
.task {
  display: flex;
  align-items: center;
  height: 31px;
  border-top: 1px solid #34485c;
  background: #8093a9;
  box-shadow: inset 0 1px #b4c0ce;
  color: #fff;
}
.orb { width: 54px; height: 30px; margin-right: 5px; }
.orb svg { display: block; width: 34px; height: 30px; margin-left: 10px; }
.app {
  width: 43px;
  height: 28px;
  margin-right: 3px;
  border: 1px solid #4c5c70;
  border-radius: 3px;
  background: linear-gradient(#a8b4c4, #8c9cb0);
  box-shadow: inset 0 0 0 1px #c4ccd8;
}
.app.active { background: linear-gradient(90deg, #f0f4f8, #b8c4d4); }
.app svg { display: block; width: 18px; height: 18px; margin: 0 auto; }
.desk { display: flex; gap: 7px; margin-left: auto; }
.desk a { display: flex; align-items: center; gap: 4px; color: #fff; text-decoration: none; }
.desk svg { width: 17px; height: 17px; }
.tray { display: flex; align-items: center; gap: 8px; margin-left: 190px; }
.tray svg { width: 16px; height: 16px; }
.tray .slim { width: 10px; height: 24px; }
.more { width: 12px; font-size: 14px; line-height: 12px; padding-bottom: 8px; }
.tray time { width: 43px; margin-left: 40px; }
.peek { width: 15px; height: 30px; border: 1px solid #2c3844; background: linear-gradient(135deg, #8894a0, #4c5864); }
```
